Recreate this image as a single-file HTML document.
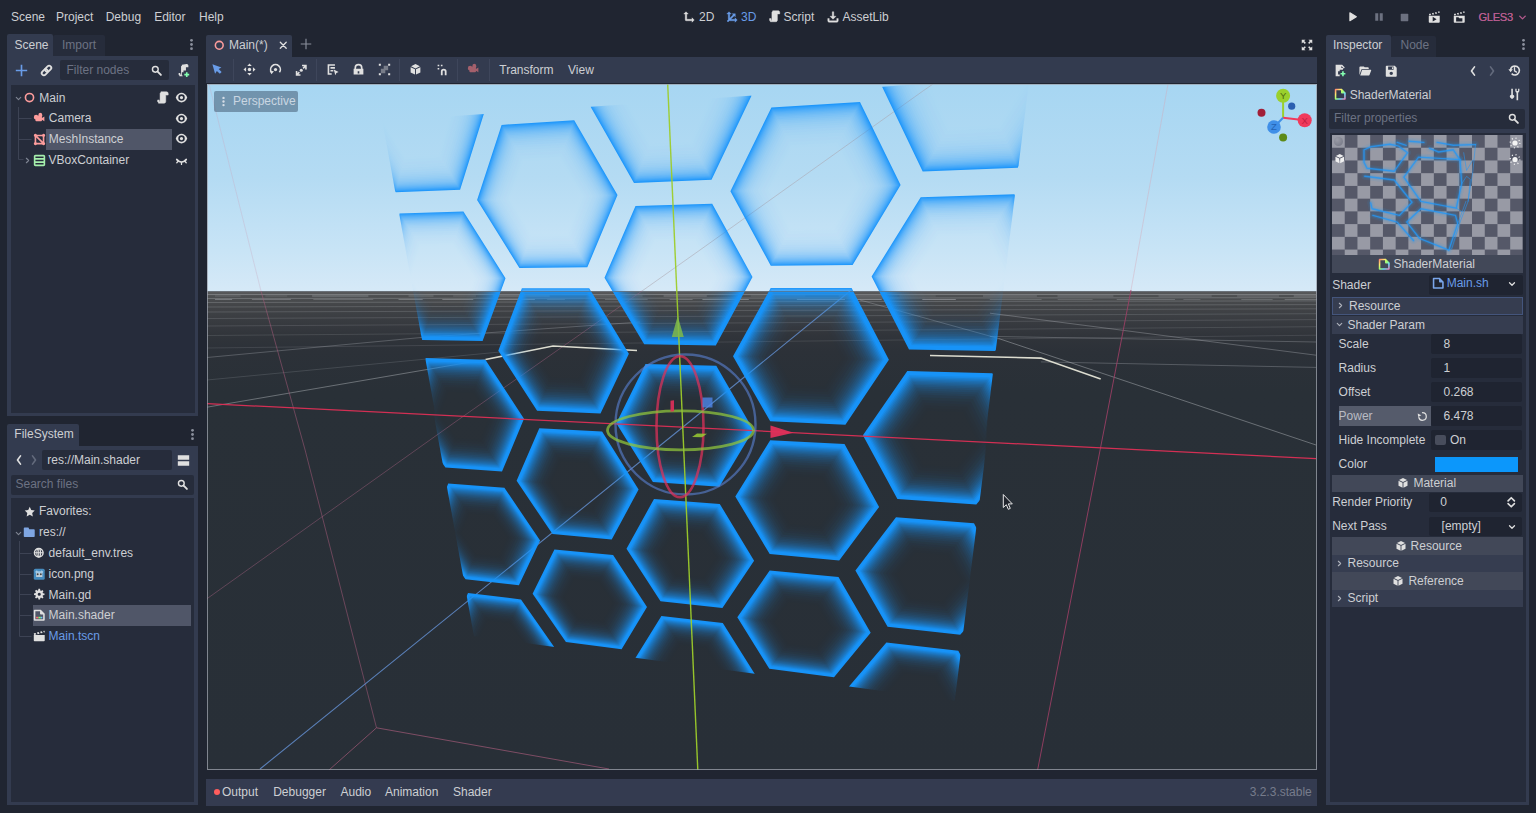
<!DOCTYPE html>
<html><head><meta charset="utf-8"><title>Godot Engine - Main</title><style>
html,body{margin:0;padding:0}
body{width:1536px;height:813px;background:#202531;position:relative;overflow:hidden;font:12px/16px "Liberation Sans",sans-serif;color:#cdcfd3}
.b,.t,.i{position:absolute}
.t{white-space:nowrap;line-height:16px;height:16px}
.i{display:block;overflow:visible}
</style></head><body>
<span class="t" style="left:11px;top:8.8px;">Scene</span>
<span class="t" style="left:56px;top:8.8px;">Project</span>
<span class="t" style="left:105.7px;top:8.8px;">Debug</span>
<span class="t" style="left:154.2px;top:8.8px;">Editor</span>
<span class="t" style="left:199px;top:8.8px;">Help</span>
<svg class="i" style="left:683.4px;top:10.5px;" width="12" height="12" viewBox="0 0 16 16"><path d="m4 1-3 3h2v8c0 .55.45 1 1 1h8v2l3-3-3-3v2h-7v-7h2z" fill="#e0e0e0" stroke="#e0e0e0" stroke-width=".500" stroke-linejoin="round"/></svg>
<span class="t" style="left:699px;top:8.6px;">2D</span>
<svg class="i" style="left:726px;top:10.5px;" width="12" height="12" viewBox="0 0 16 16"><path d="m4 1-3 3h2v7.600l-1.700 1.700 1.400 1.400 1.700-1.700h7.600v2l3-3-3-3v2h-5.600l4.600-4.600 1.400 1.400v-4.200h-4.200l1.400 1.400-4.600 4.600v-5.600h2z" fill="#699ce8" stroke="#699ce8" stroke-width=".500" stroke-linejoin="round"/></svg>
<span class="t" style="left:741px;top:8.6px;color:#699ce8;">3D</span>
<svg class="i" style="left:768px;top:10.2px;" width="12.5" height="12.5" viewBox="0 0 16 16"><path d="m6 1v1c-.55 0-1 .45-1 1v10h-1v-2h-2v2c0 .36.19.69.5.87.15.09.32.13.5.13v1h7c1.1 0 2-.9 2-2v-8h3v-2c0-1.1-.9-2-2-2z" fill="#e0e0e0" stroke="#e0e0e0" stroke-width=".600" stroke-linejoin="round"/></svg>
<span class="t" style="left:783.6px;top:8.6px;">Script</span>
<svg class="i" style="left:827.4px;top:10.5px;" width="12" height="12" viewBox="0 0 16 16"><path d="m7 1v6h-3l4 4 4-4h-3v-6zm-6 9v3c0 1.100.900 2 2 2h10c1.100 0 2-.900 2-2v-3h-2v3h-10v-3z" fill="#e0e0e0" stroke="#e0e0e0" stroke-width=".500" stroke-linejoin="round"/></svg>
<span class="t" style="left:842.6px;top:8.6px;">AssetLib</span>
<svg class="i" style="left:1347.2px;top:11.2px;" width="11.5" height="11.5" viewBox="0 0 16 16"><path d="M4 2.500l9 5.500-9 5.500z" fill="#e0e0e0" stroke="#e0e0e0" stroke-width="1.500" stroke-linejoin="round"/></svg>
<svg class="i" style="left:1373.3px;top:11px;" width="12" height="12" viewBox="0 0 16 16"><path d="M3 3h4v10H3zM9 3h4v10H9z" fill="#6c7180"/></svg>
<svg class="i" style="left:1399px;top:11.5px;" width="11" height="11" viewBox="0 0 16 16"><rect x="2.500" y="2.500" width="11" height="11" rx="1" fill="#6c7180"/></svg>
<svg class="i" style="left:1427.5px;top:10.8px;" width="12.5" height="12.5" viewBox="0 0 16 16"><path d="M1 6v8c0 .55.45 1 1 1h12c.55 0 1-.45 1-1V6zm5 1.500 5 3-5 3z" fill="#e0e0e0"/><path d="M1.200 2.800l1.900-.500.900 1.900-2.300.600zM5 1.800l1.900-.500.900 1.900-1.900.500zM8.800.800l1.900-.500.900 1.900-1.900.500zM12.600-.200l1.900-.500.500 1.900-1.500.500z" fill="#e0e0e0" transform="translate(0 1)"/></svg>
<svg class="i" style="left:1453px;top:10.8px;" width="12.5" height="12.5" viewBox="0 0 16 16"><path d="M1 6v8c0 .55.45 1 1 1h12c.55 0 1-.45 1-1V6zm3 2h3l1 1.200h4v4.300H4z" fill="#e0e0e0"/><path d="M1.200 2.800l1.900-.500.900 1.900-2.300.600zM5 1.800l1.900-.500.900 1.900-1.900.500zM8.800.800l1.900-.500.900 1.900-1.900.500zM12.600-.200l1.900-.500.500 1.900-1.500.500z" fill="#e0e0e0" transform="translate(0 1)"/></svg>
<span class="t" style="left:1478.5px;top:8.9px;color:#b85c8f;letter-spacing:-.35px;font-size:11.200px;text-shadow:0 0 .4px #b85c8f">GLES3</span>
<svg class="i" style="left:1516.5px;top:12px;" width="11" height="11" viewBox="0 0 16 16"><path d="M4 6l4 4 4-4" fill="none" stroke="#b35a8c" stroke-width="2" stroke-linecap="round" stroke-linejoin="round"/></svg>
<div class="b" style="left:7px;top:34px;width:46px;height:23px;background:#333b4f;border-radius:2px 2px 0 0"></div>
<div class="b" style="left:53px;top:35px;width:52px;height:21px;background:#262c3b;border-radius:2px 2px 0 0"></div>
<span class="t" style="left:14.5px;top:36.6px;">Scene</span>
<span class="t" style="left:62px;top:36.6px;color:#6c7283;">Import</span>
<svg class="i" style="left:185.2px;top:38.2px;" width="13" height="13" viewBox="0 0 16 16"><circle cx="8" cy="2.800" r="1.700" fill="#8a8f9c"/><circle cx="8" cy="8" r="1.700" fill="#8a8f9c"/><circle cx="8" cy="13.200" r="1.700" fill="#8a8f9c"/></svg>
<div class="b" style="left:7px;top:56px;width:190.5px;height:359.8px;background:#333b4f;"></div>
<svg class="i" style="left:14.5px;top:63.8px;" width="13" height="13" viewBox="0 0 16 16"><path d="M7 1v6H1v2h6v6h2V9h6V7H9V1z" fill="#699ce8"/></svg>
<svg class="i" style="left:40.2px;top:63.8px;" width="13" height="13" viewBox="0 0 16 16"><g fill="none" stroke="#e0e0e0" stroke-width="2.2" transform="rotate(-45 8 8)"><rect x="0.8" y="5.3" width="8.4" height="5.4" rx="2.7"/><rect x="6.8" y="5.3" width="8.4" height="5.4" rx="2.7"/></g></svg>
<div class="b" style="left:60px;top:60px;width:109px;height:20px;background:#262c3b;border-radius:2px"></div>
<span class="t" style="left:66.5px;top:62.2px;color:#6c7283;">Filter nodes</span>
<svg class="i" style="left:151.2px;top:64.8px;" width="11.5" height="11.5" viewBox="0 0 16 16"><circle cx="6" cy="6" r="4" fill="none" stroke="#e0e0e0" stroke-width="2"/><path d="M9.2 9.2l4.6 4.6" stroke="#e0e0e0" stroke-width="2.6" stroke-linecap="round"/></svg>
<svg class="i" style="left:176.8px;top:64px;" width="13" height="13" viewBox="0 0 16 16"><path d="m6 1v1c-.55 0-1 .45-1 1v10h-1v-2h-2v2c0 .36.19.69.5.87.15.09.32.13.5.13v1h4v-1h-1v-4h2v-2h3v-4h3v-2c0-1.1-.9-2-2-2z" fill="#e0e0e0"/><path d="m11 10v2h-2v2h2v2h2v-2h2v-2h-2v-2z" fill="#84ffb1"/></svg>
<div class="b" style="left:10.5px;top:84.5px;width:184px;height:328px;background:#262c3b;"></div>
<div class="b" style="left:46px;top:129px;width:125.7px;height:20.8px;background:#505668;"></div>
<svg class="i" style="left:0;top:84px" width="60" height="90" viewBox="0 84 60 90"><path d="M18.500 107v52.500M18.500 118.500h13M18.500 139.500h13M18.500 159.500h5" stroke="#3d4354" stroke-width="1" fill="none"/></svg>
<svg class="i" style="left:13.5px;top:94px;" width="9" height="9" viewBox="0 0 16 16"><path d="M4 6l4 4 4-4" fill="none" stroke="#7f8593" stroke-width="2" stroke-linecap="round" stroke-linejoin="round"/></svg>
<svg class="i" style="left:23.3px;top:91.1px;" width="13" height="13" viewBox="0 0 16 16"><circle cx="8" cy="8" r="5" fill="none" stroke="#fc9c9c" stroke-width="2"/></svg>
<span class="t" style="left:39.3px;top:89.6px;">Main</span>
<svg class="i" style="left:155.9px;top:90.8px;" width="13" height="13" viewBox="0 0 16 16"><path d="m6 1v1c-.55 0-1 .45-1 1v10h-1v-2h-2v2c0 .36.19.69.5.87.15.09.32.13.5.13v1h7c1.1 0 2-.9 2-2v-8h3v-2c0-1.1-.9-2-2-2z" fill="#e0e0e0" stroke="#e0e0e0" stroke-width=".600" stroke-linejoin="round"/></svg>
<svg class="i" style="left:175.2px;top:90.8px;" width="13" height="13" viewBox="0 0 16 16"><path d="m8 2c-2.56 0-5.79 1.95-6.96 5.71a1 1 0 0 0 0 .57c1.12 3.93 4.46 5.72 6.96 5.72s5.84-1.79 6.96-5.72a1 1 0 0 0 0-.56c-1.1-3.78-4.4-5.72-6.96-5.72zm0 2a4 4 0 0 1 4 4 4 4 0 0 1 -4 4 4 4 0 0 1 -4-4 4 4 0 0 1 4-4zm0 2a2 2 0 0 0 -2 2 2 2 0 0 0 2 2 2 2 0 0 0 2-2 2 2 0 0 0 -2-2z" fill="#e0e0e0"/></svg>
<svg class="i" style="left:32.7px;top:111.9px;" width="13" height="13" viewBox="0 0 16 16"><path d="m9.5 1a3 3 0 0 0 -3 3 3 3 0 0 0 .27 1.24 3 3 0 0 0 -2.77-1.85 3 3 0 0 0 -3 3 3 3 0 0 0 2 2.83v1.17c0 .55.45 1 1 1h6c.55 0 1-.45 1-1v-1l3 2v-6l-3 2v-1.77a3 3 0 0 0 .5-1.62 3 3 0 0 0 -3-3z" fill="#fc9c9c"/></svg>
<span class="t" style="left:48.8px;top:110.4px;">Camera</span>
<svg class="i" style="left:175.2px;top:111.5px;" width="13" height="13" viewBox="0 0 16 16"><path d="m8 2c-2.56 0-5.79 1.95-6.96 5.71a1 1 0 0 0 0 .57c1.12 3.93 4.46 5.72 6.96 5.72s5.84-1.79 6.96-5.72a1 1 0 0 0 0-.56c-1.1-3.78-4.4-5.72-6.96-5.72zm0 2a4 4 0 0 1 4 4 4 4 0 0 1 -4 4 4 4 0 0 1 -4-4 4 4 0 0 1 4-4zm0 2a2 2 0 0 0 -2 2 2 2 0 0 0 2 2 2 2 0 0 0 2-2 2 2 0 0 0 -2-2z" fill="#e0e0e0"/></svg>
<svg class="i" style="left:32.7px;top:132.7px;" width="13" height="13" viewBox="0 0 16 16"><path transform="matrix(-1 0 0 1 16 0)" d="m3 1a2 2 0 0 0 -2 2 2 2 0 0 0 1 1.73v6.54a2 2 0 0 0 -1 1.73 2 2 0 0 0 2 2 2 2 0 0 0 1.73-1h6.54a2 2 0 0 0 1.73 1 2 2 0 0 0 2-2 2 2 0 0 0 -1-1.73v-6.54a2 2 0 0 0 1-1.73 2 2 0 0 0 -2-2 2 2 0 0 0 -1.73 1h-6.54a2 2 0 0 0 -1.73-1zm1.73 3h5.86l-6.59 6.59v-5.86a2 2 0 0 0 .73-.73zm7.27 1.41v5.86a2 2 0 0 0 -.73.73h-5.86z" fill="#fc9c9c"/></svg>
<span class="t" style="left:48.8px;top:131.2px;">MeshInstance</span>
<svg class="i" style="left:175.2px;top:132.2px;" width="13" height="13" viewBox="0 0 16 16"><path d="m8 2c-2.56 0-5.79 1.95-6.96 5.71a1 1 0 0 0 0 .57c1.12 3.93 4.46 5.72 6.96 5.72s5.84-1.79 6.96-5.72a1 1 0 0 0 0-.56c-1.1-3.78-4.4-5.72-6.96-5.72zm0 2a4 4 0 0 1 4 4 4 4 0 0 1 -4 4 4 4 0 0 1 -4-4 4 4 0 0 1 4-4zm0 2a2 2 0 0 0 -2 2 2 2 0 0 0 2 2 2 2 0 0 0 2-2 2 2 0 0 0 -2-2z" fill="#e0e0e0"/></svg>
<svg class="i" style="left:22.5px;top:155.5px;" width="9" height="9" viewBox="0 0 16 16"><path d="M6 4l4 4-4 4" fill="none" stroke="#7f8593" stroke-width="2" stroke-linecap="round" stroke-linejoin="round"/></svg>
<svg class="i" style="left:32.7px;top:153.5px;" width="13" height="13" viewBox="0 0 16 16"><path d="m3 1c-1.1 0-2 .9-2 2v10c0 1.1.9 2 2 2h10c1.1 0 2-.9 2-2v-10c0-1.1-.9-2-2-2zm0 2h10v2h-10zm0 4h10v2h-10zm0 4h10v2h-10z" fill="#a5efac"/></svg>
<span class="t" style="left:48.5px;top:152px;">VBoxContainer</span>
<svg class="i" style="left:175.2px;top:154.3px;" width="13" height="13" viewBox="0 0 16 16"><path d="M2.300 6.800Q8 13.200 13.700 6.800" fill="none" stroke="#e0e0e0" stroke-width="2.300" stroke-linecap="round"/><path d="M3.600 9.300l-1.400 1.500M12.400 9.300l1.400 1.500M8 11v1.800" stroke="#e0e0e0" stroke-width="1.600" stroke-linecap="round"/></svg>
<div class="b" style="left:7px;top:424px;width:71.5px;height:23px;background:#333b4f;border-radius:2px 2px 0 0"></div>
<span class="t" style="left:14.3px;top:426.3px;">FileSystem</span>
<svg class="i" style="left:185.5px;top:428px;" width="13" height="13" viewBox="0 0 16 16"><circle cx="8" cy="2.800" r="1.700" fill="#8a8f9c"/><circle cx="8" cy="8" r="1.700" fill="#8a8f9c"/><circle cx="8" cy="13.200" r="1.700" fill="#8a8f9c"/></svg>
<div class="b" style="left:7px;top:446px;width:190.5px;height:359px;background:#333b4f;"></div>
<svg class="i" style="left:12.6px;top:454px;" width="12" height="12" viewBox="0 0 16 16"><path d="M10 2.500l-4 5.500 4 5.500" fill="none" stroke="#e0e0e0" stroke-width="2.200" stroke-linecap="round" stroke-linejoin="round"/></svg>
<svg class="i" style="left:28px;top:454px;" width="12" height="12" viewBox="0 0 16 16"><path d="M6 2.500l4 5.500-4 5.500" fill="none" stroke="#636a7c" stroke-width="2.200" stroke-linecap="round" stroke-linejoin="round"/></svg>
<div class="b" style="left:42.3px;top:450.4px;width:129.7px;height:20.1px;background:#262c3b;border-radius:2px"></div>
<span class="t" style="left:47.3px;top:452px;">res://Main.shader</span>
<svg class="i" style="left:177px;top:453.8px;" width="13" height="13" viewBox="0 0 16 16"><path d="M1 1.500h14V7H1zM1 9h14v5.500H1z" fill="#e0e0e0"/></svg>
<div class="b" style="left:10.7px;top:474.5px;width:183.3px;height:20px;background:#262c3b;border-radius:2px"></div>
<span class="t" style="left:15.5px;top:476px;color:#6c7283;">Search files</span>
<svg class="i" style="left:177.2px;top:478.8px;" width="11.5" height="11.5" viewBox="0 0 16 16"><circle cx="6" cy="6" r="4" fill="none" stroke="#e0e0e0" stroke-width="2"/><path d="M9.2 9.2l4.6 4.6" stroke="#e0e0e0" stroke-width="2.6" stroke-linecap="round"/></svg>
<div class="b" style="left:10.7px;top:498px;width:183.3px;height:303.5px;background:#262c3b;"></div>
<div class="b" style="left:33px;top:605.2px;width:158px;height:20.4px;background:#505668;"></div>
<svg class="i" style="left:0;top:520px" width="60" height="130" viewBox="0 520 60 130"><path d="M19.500 541v95.500M19.500 553.500h12M19.500 574.500h12M19.500 594.500h12M19.500 615.500h12M19.500 636.500h12" stroke="#3d4354" stroke-width="1" fill="none"/></svg>
<svg class="i" style="left:23.6px;top:505.9px;" width="11.5" height="11.5" viewBox="0 0 16 16"><path d="M8 1.200l2.100 4.500 4.900.600-3.600 3.400.900 4.900L8 12.200l-4.300 2.400.900-4.900L1 6.300l4.900-.600z" fill="#e0e0e0"/></svg>
<span class="t" style="left:39px;top:503.4px;">Favorites:</span>
<svg class="i" style="left:14px;top:528.5px;" width="9" height="9" viewBox="0 0 16 16"><path d="M4 6l4 4 4-4" fill="none" stroke="#7f8593" stroke-width="2" stroke-linecap="round" stroke-linejoin="round"/></svg>
<svg class="i" style="left:23.1px;top:525.8px;" width="12.5" height="12.5" viewBox="0 0 16 16"><path d="M2 2c-.55 0-1 .45-1 1v10c0 .55.45 1 1 1h12c.55 0 1-.45 1-1V5c0-.55-.45-1-1-1H8L7 2z" fill="#7fa6e2"/></svg>
<span class="t" style="left:39px;top:524.2px;">res://</span>
<svg class="i" style="left:33.2px;top:547.2px;" width="11.5" height="11.5" viewBox="0 0 16 16"><circle cx="8" cy="8" r="6" fill="none" stroke="#e0e0e0" stroke-width="2"/><ellipse cx="8" cy="8" rx="2.600" ry="6" fill="none" stroke="#e0e0e0" stroke-width="1.500"/><path d="M2 8h12M8 2v12" stroke="#e0e0e0" stroke-width="1.500"/></svg>
<span class="t" style="left:48.6px;top:545px;">default_env.tres</span>
<svg class="i" style="left:32.8px;top:567.5px;" width="12.5" height="12.5" viewBox="0 0 16 16"><rect x="1" y="1" width="14" height="14" rx="2" fill="#478cbf"/><path d="M4 6h8v5.500H4z" fill="#e0e0e0" opacity=".8"/><circle cx="6" cy="8" r="1.200" fill="#414042"/><circle cx="10" cy="8" r="1.200" fill="#414042"/><path d="M3 4.500l2-1.500 1 1h4l1-1 2 1.500-.5 2h-9z" fill="#a4c9e4"/></svg>
<span class="t" style="left:48.6px;top:565.8px;">icon.png</span>
<svg class="i" style="left:32.8px;top:588.4px;" width="12.5" height="12.5" viewBox="0 0 16 16"><path d="M7 1l-.4 2-.9.400-1.700-1.100-1.400 1.400 1.100 1.700-.4.900L1.300 7v2l2 .4.400.9-1.100 1.700 1.400 1.400 1.700-1.100.9.400.4 2h2l.4-2 .9-.400 1.700 1.100 1.400-1.400-1.100-1.700.4-.9 2-.4V7l-2-.4-.4-.9 1.100-1.700-1.400-1.400-1.700 1.100-.9-.400L9 1zm1 5a2 2 0 1 1 0 4 2 2 0 0 1 0-4z" fill="#e0e0e0"/></svg>
<span class="t" style="left:48.6px;top:586.6px;">Main.gd</span>
<svg class="i" style="left:32.8px;top:609.1px;" width="12.5" height="12.5" viewBox="0 0 16 16"><path d="M2 1c-.55 0-1 .45-1 1v12c0 .55.45 1 1 1h12c.55 0 1-.45 1-1V6l-5-5zm1 2h6v3c0 .55.45 1 1 1h3v6H3z" fill="#e0e0e0"/><path d="M4 10h3v2H4z" fill="#ff7070"/><path d="M7 10h3v2H7z" fill="#7aff70"/><path d="M10 10h2v2h-2z" fill="#70bfff"/></svg>
<span class="t" style="left:48.6px;top:607.4px;">Main.shader</span>
<svg class="i" style="left:32.8px;top:629.8px;" width="12.5" height="12.5" viewBox="0 0 16 16"><path d="M1 6.500v7c0 .55.45 1 1 1h12c.55 0 1-.45 1-1v-7z" fill="#e0e0e0"/><path d="M1 2.800l2.300-.600 1 2-3 .800zM5 1.800l2.300-.600 1 2-2.300.600zM9 .800l2.300-.600 1 2-2.300.600zM13-.200l1.700-.400.500 2-1.200.400z" fill="#e0e0e0" transform="translate(0 1.500)"/></svg>
<span class="t" style="left:48.6px;top:628.2px;color:#699ce8;">Main.tscn</span>
<div class="b" style="left:206.3px;top:34.5px;width:85.7px;height:22.5px;background:#333b4f;border-radius:2px 2px 0 0"></div>
<svg class="i" style="left:212.8px;top:38.5px;" width="12.5" height="12.5" viewBox="0 0 16 16"><circle cx="8" cy="8" r="5" fill="none" stroke="#fc9c9c" stroke-width="2"/></svg>
<span class="t" style="left:229px;top:36.7px;">Main(*)</span>
<svg class="i" style="left:277.8px;top:39.5px;" width="10.5" height="10.5" viewBox="0 0 16 16"><path d="M3.5 3.5l9 9M12.5 3.5l-9 9" stroke="#e0e0e0" stroke-width="2" stroke-linecap="round"/></svg>
<svg class="i" style="left:299px;top:37.3px;" width="14" height="14" viewBox="0 0 16 16"><path d="M8 2v12M2 8h12" stroke="#8a8f9c" stroke-width="1.3"/></svg>
<svg class="i" style="left:1301px;top:38.7px;" width="12" height="12" viewBox="0 0 16 16"><path d="M1 1h5l-1.800 1.800 2.300 2.300-1.400 1.400-2.300-2.300L1 6zM15 1v5l-1.800-1.800-2.300 2.300-1.400-1.400 2.300-2.300L10 1zM1 15v-5l1.800 1.800 2.300-2.300 1.400 1.400-2.300 2.300L6 15zM15 15h-5l1.800-1.800-2.300-2.300 1.400-1.400 2.300 2.300L15 10z" fill="#e0e0e0"/></svg>
<div class="b" style="left:206.3px;top:56.7px;width:1110.7px;height:26.3px;background:#333b4f;"></div>
<svg class="i" style="left:211.1px;top:63.3px;" width="12.5" height="12.5" viewBox="0 0 16 16"><path d="M1.800 1.500L5.200 13.600 7.500 10.100 11.300 13.900 13.600 11.600 9.800 7.800 13.300 5.600z" fill="#699ce8"/></svg>
<div class="b" style="left:232.5px;top:59px;width:1px;height:22px;background:#3e465b;"></div>
<div class="b" style="left:316px;top:59px;width:1px;height:22px;background:#3e465b;"></div>
<div class="b" style="left:398.5px;top:59px;width:1px;height:22px;background:#3e465b;"></div>
<div class="b" style="left:456.5px;top:59px;width:1px;height:22px;background:#3e465b;"></div>
<div class="b" style="left:488.5px;top:59px;width:1px;height:22px;background:#3e465b;"></div>
<svg class="i" style="left:243.2px;top:63.3px;" width="13" height="13" viewBox="0 0 16 16"><path d="m8 .600-2.800 3.200h5.600zm0 14.800-2.800-3.200h5.600zm-7.400-7.400 3.200-2.800v5.600zm14.800 0-3.200-2.800v5.600z" fill="#e0e0e0"/><circle cx="8" cy="8" r="2.100" fill="#e0e0e0"/></svg>
<svg class="i" style="left:268.5px;top:63.3px;" width="13" height="13" viewBox="0 0 16 16"><path d="M3.200 11.500A6 6 0 1 1 12.800 11.500" fill="none" stroke="#e0e0e0" stroke-width="2"/><path d="M.8 9.500l2.200 4.300 3.100-3.500z" fill="#e0e0e0"/><circle cx="8" cy="8" r="2" fill="#e0e0e0"/></svg>
<svg class="i" style="left:294.8px;top:63.5px;" width="12.5" height="12.5" viewBox="0 0 16 16"><path d="M9 1h6v6h-2v-2.600l-1.900 1.900-1.400-1.400 1.900-1.900h-2.600zM1 9h2v2.600l1.900-1.900 1.400 1.400-1.900 1.900h2.600v2h-6z" fill="#e0e0e0"/><circle cx="8" cy="8" r="2" fill="#e0e0e0"/></svg>
<svg class="i" style="left:326.2px;top:63.3px;" width="13" height="13" viewBox="0 0 16 16"><path d="M2 1.500h9v2H4v9h3v2H2zM5.500 5h5.500v2h-5.500zM5.500 8.500h3.500v2h-3.500z" fill="#e0e0e0"/><path d="m9.500 8 2 7 1.300-2.700 2.700-1.300z" fill="#e0e0e0"/></svg>
<svg class="i" style="left:351.5px;top:63.3px;" width="13" height="13" viewBox="0 0 16 16"><path d="m8 1a5 5 0 0 0 -5 5v1h-1v7h12v-7h-1v-1a5 5 0 0 0 -5-5zm0 2a3 3 0 0 1 3 3v1h-6v-1a3 3 0 0 1 3-3zm-1 7h2v3h-2z" fill="#e0e0e0"/></svg>
<svg class="i" style="left:377.5px;top:63.3px;" width="13" height="13" viewBox="0 0 16 16"><path d="M1 1h2.500v2.500H1zM12.500 1H15v2.500h-2.500zM1 12.500h2.500V15H1zM12.500 12.500H15V15h-2.500z" fill="#e0e0e0"/><path d="M7 3.500h5.500V9H9v3.500H3.500V7H7z" fill="#e0e0e0" fill-opacity=".4"/></svg>
<svg class="i" style="left:409.2px;top:63.3px;" width="13" height="13" viewBox="0 0 16 16"><path d="M8 1.300L13.400 4 8 6.700 2.600 4zM2 5.100l5.400 2.700v6.500L2 11.600zM14 5.100v6.500l-5.400 2.700V7.800z" fill="#e0e0e0"/></svg>
<svg class="i" style="left:436.1px;top:63.3px;" width="13" height="13" viewBox="0 0 16 16"><path d="M2 2h2v2H2zM6 2h2v2H6zM2 6h2v2H2z" fill="#e0e0e0"/><path d="M6 15v-4.500a3.500 3.500 0 0 1 7 0V15h-2.200v-4.500a1.300 1.300 0 0 0-2.600 0V15z" fill="#e0e0e0"/></svg>
<svg class="i" style="left:466.5px;top:63.3px;" width="13" height="13" viewBox="0 0 16 16"><path d="m9.5 1a3 3 0 0 0 -3 3 3 3 0 0 0 .27 1.24 3 3 0 0 0 -2.77-1.85 3 3 0 0 0 -3 3 3 3 0 0 0 2 2.83v1.17c0 .55.45 1 1 1h6c.55 0 1-.45 1-1v-1l3 2v-6l-3 2v-1.77a3 3 0 0 0 .5-1.62 3 3 0 0 0 -3-3z" fill="#a4606c"/></svg>
<span class="t" style="left:499.3px;top:61.7px;">Transform</span>
<span class="t" style="left:568px;top:61.7px;">View</span>
<div class="b" style="left:206.3px;top:778.5px;width:1111.2px;height:27.5px;background:#343b50;"></div>
<div class="b" style="left:213.500px;top:789px;width:6px;height:6px;border-radius:3px;background:#ff5d5d"></div>
<span class="t" style="left:222px;top:783.8px;">Output</span>
<span class="t" style="left:273.2px;top:783.8px;">Debugger</span>
<span class="t" style="left:340.5px;top:783.8px;">Audio</span>
<span class="t" style="left:385px;top:783.8px;">Animation</span>
<span class="t" style="left:453px;top:783.8px;">Shader</span>
<span class="t" style="left:1249.7px;top:783.8px;color:#777c8c;">3.2.3.stable</span>
<div class="b" style="left:1325.7px;top:35px;width:65.3px;height:22px;background:#333b4f;border-radius:2px 2px 0 0"></div>
<div class="b" style="left:1391px;top:35.5px;width:44.6px;height:21px;background:#262c3b;border-radius:2px 2px 0 0"></div>
<span class="t" style="left:1333px;top:36.7px;">Inspector</span>
<span class="t" style="left:1400.5px;top:36.7px;color:#6c7283;">Node</span>
<svg class="i" style="left:1516.8px;top:38.2px;" width="13" height="13" viewBox="0 0 16 16"><circle cx="8" cy="2.800" r="1.700" fill="#8a8f9c"/><circle cx="8" cy="8" r="1.700" fill="#8a8f9c"/><circle cx="8" cy="13.200" r="1.700" fill="#8a8f9c"/></svg>
<div class="b" style="left:1325.7px;top:56.5px;width:203.3px;height:748.5px;background:#333b4f;"></div>
<svg class="i" style="left:1333.5px;top:64.3px;" width="13" height="13" viewBox="0 0 16 16"><path d="M2 1v14h5v-2H5v-4h2V7h4V5.500L13 5v-1l-3-3zm7 1.500L11.500 5H9z" fill="#e0e0e0"/><path d="m10 9v2h-2v2h2v2h2v-2h2v-2h-2v-2z" fill="#84ffb1"/></svg>
<svg class="i" style="left:1358.9px;top:64.3px;" width="13" height="13" viewBox="0 0 16 16"><path d="M1.500 3c-.5 0-1 .5-1 1v9.500l2.300-6.500c.2-.6.700-1 1.300-1H12V5c0-.5-.5-1-1-1H7L6 3zM4.200 7.200c-.3 0-.5.200-.6.500L1.500 14h10.800c.3 0 .5-.2.600-.5l2.100-5.600c.1-.4-.1-.7-.5-.7z" fill="#e0e0e0"/></svg>
<svg class="i" style="left:1384.8px;top:64.5px;" width="12.5" height="12.5" viewBox="0 0 16 16"><path d="M2 1c-.5 0-1 .5-1 1v12c0 .5.5 1 1 1h12c.5 0 1-.5 1-1V3.500L12.500 1zM4 2h7v4H4zm5 .800v2.400h1.400V2.800zM8 8.500a2.200 2.200 0 1 1 0 4.400 2.200 2.200 0 0 1 0-4.400z" fill="#e0e0e0"/></svg>
<svg class="i" style="left:1466.9px;top:64.8px;" width="12" height="12" viewBox="0 0 16 16"><path d="M10 2.500l-4 5.500 4 5.500" fill="none" stroke="#e0e0e0" stroke-width="2.200" stroke-linecap="round" stroke-linejoin="round"/></svg>
<svg class="i" style="left:1485.8px;top:64.8px;" width="12" height="12" viewBox="0 0 16 16"><path d="M6 2.500l4 5.500-4 5.500" fill="none" stroke="#636a7c" stroke-width="2.200" stroke-linecap="round" stroke-linejoin="round"/></svg>
<svg class="i" style="left:1508.4px;top:64.3px;" width="13" height="13" viewBox="0 0 16 16"><path d="M8.500 1.500a6.500 6.500 0 0 0-6.300 5H.5l2.700 3.500L6 6.500H4.300a4.500 4.500 0 1 1 .9 4.600l-1.400 1.400A6.500 6.500 0 1 0 8.500 1.500z" fill="#e0e0e0"/><path d="M8 4.500v4l2.500 1.500" fill="none" stroke="#e0e0e0" stroke-width="1.600" stroke-linecap="round"/></svg>
<svg class="i" style="left:1333.8px;top:88.2px;" width="12.5" height="12.5" viewBox="0 0 16 16"><path d="M2 1c-.55 0-1 .45-1 1v12c0 .55.45 1 1 1h12c.55 0 1-.45 1-1V6l-5-5zm1 2h6v3c0 .55.45 1 1 1h3v6H3z" fill="url(#rb)"/></svg>
<span class="t" style="left:1349.7px;top:86.5px;">ShaderMaterial</span>
<svg class="i" style="left:1507.9px;top:88px;" width="13" height="13" viewBox="0 0 16 16"><path d="M4 1v7.300a2.500 2.500 0 1 0 2 0V1z" fill="#e0e0e0"/><path d="M9 1v2.500c0 1 .6 1.900 1.500 2.300V15h2V5.800c.9-.4 1.500-1.300 1.500-2.300V1h-1.600v2.800h-1.800V1z" fill="#e0e0e0"/></svg>
<div class="b" style="left:1328.6px;top:108.5px;width:196.9px;height:20.5px;background:#262c3b;border-radius:2px"></div>
<span class="t" style="left:1334px;top:110.3px;color:#6c7283;">Filter properties</span>
<svg class="i" style="left:1508.2px;top:113px;" width="11.5" height="11.5" viewBox="0 0 16 16"><circle cx="6" cy="6" r="4" fill="none" stroke="#e0e0e0" stroke-width="2"/><path d="M9.2 9.2l4.6 4.6" stroke="#e0e0e0" stroke-width="2.6" stroke-linecap="round"/></svg>
<div class="b" style="left:1329.6px;top:132.5px;width:196.4px;height:669.5px;background:#262c3b;"></div>
<svg class="i" style="left:1332px;top:135px" width="190.7" height="120" viewBox="0 0 190.7 120">
<defs><pattern id="ck" width="25.46" height="25.46" patternUnits="userSpaceOnUse"><rect width="25.46" height="25.46" fill="#555868"/><rect width="12.73" height="12.73" fill="#989aa5"/><rect x="12.73" y="12.73" width="12.73" height="12.73" fill="#989aa5"/></pattern></defs>
<rect width="100%" height="100%" fill="url(#ck)"/>
<g fill="none" stroke="#2496f4" stroke-linejoin="round" stroke-linecap="round">
<polyline points="75.6,17.7 66.7,11.1 57.9,9.2 38.7,11.8 32.0,14.8 32.0,27.3 35.0,33.2 62.3,36.2 75.6,17.7" stroke-width="7" stroke-opacity=".09"/>
<polyline points="32.8,41.3 62.3,45.0 80.0,67.2 67.4,80.4 40.1,73.8 38.7,67.9" stroke-width="7" stroke-opacity=".09"/>
<polyline points="124.3,73.1 88.8,66.4 71.9,42.1 86.6,22.1 128.0,24.6 129.7,48.7 124.3,73.1" stroke-width="7" stroke-opacity=".09"/>
<polyline points="88.8,73.8 74.8,87.1 87.4,103.3 116.9,115.1 125.7,88.6 123.5,80.4 88.8,73.8" stroke-width="7" stroke-opacity=".09"/>
<polyline points="40.9,80.4 65.2,87.1 81.5,105.5" stroke-width="7" stroke-opacity=".09"/>
<polyline points="65.2,7.4 74.1,10.3" stroke-width="7" stroke-opacity=".09"/>
<polyline points="77.0,6.2 91.8,7.4" stroke-width="7" stroke-opacity=".09"/>
<polyline points="105.1,7.4 121.3,10.3 143.5,9.6" stroke-width="7" stroke-opacity=".09"/>
<polyline points="97.7,13.3 106.6,17.0 121.3,14.8 128.0,24.6" stroke-width="7" stroke-opacity=".09"/>
<polyline points="75.6,17.7 66.7,11.1 57.9,9.2 38.7,11.8 32.0,14.8 32.0,27.3 35.0,33.2 62.3,36.2 75.6,17.7" stroke-width="3.600" stroke-opacity=".2"/>
<polyline points="32.8,41.3 62.3,45.0 80.0,67.2 67.4,80.4 40.1,73.8 38.7,67.9" stroke-width="3.600" stroke-opacity=".2"/>
<polyline points="124.3,73.1 88.8,66.4 71.9,42.1 86.6,22.1 128.0,24.6 129.7,48.7 124.3,73.1" stroke-width="3.600" stroke-opacity=".2"/>
<polyline points="88.8,73.8 74.8,87.1 87.4,103.3 116.9,115.1 125.7,88.6 123.5,80.4 88.8,73.8" stroke-width="3.600" stroke-opacity=".2"/>
<polyline points="40.9,80.4 65.2,87.1 81.5,105.5" stroke-width="3.600" stroke-opacity=".2"/>
<polyline points="65.2,7.4 74.1,10.3" stroke-width="3.600" stroke-opacity=".2"/>
<polyline points="77.0,6.2 91.8,7.4" stroke-width="3.600" stroke-opacity=".2"/>
<polyline points="105.1,7.4 121.3,10.3 143.5,9.6" stroke-width="3.600" stroke-opacity=".2"/>
<polyline points="97.7,13.3 106.6,17.0 121.3,14.8 128.0,24.6" stroke-width="3.600" stroke-opacity=".2"/>
<polyline points="75.6,17.7 66.7,11.1 57.9,9.2 38.7,11.8 32.0,14.8 32.0,27.3 35.0,33.2 62.3,36.2 75.6,17.7" stroke-width="1.400" stroke-opacity=".82"/>
<polyline points="32.8,41.3 62.3,45.0 80.0,67.2 67.4,80.4 40.1,73.8 38.7,67.9" stroke-width="1.400" stroke-opacity=".82"/>
<polyline points="124.3,73.1 88.8,66.4 71.9,42.1 86.6,22.1 128.0,24.6 129.7,48.7 124.3,73.1" stroke-width="1.400" stroke-opacity=".82"/>
<polyline points="88.8,73.8 74.8,87.1 87.4,103.3 116.9,115.1 125.7,88.6 123.5,80.4 88.8,73.8" stroke-width="1.400" stroke-opacity=".82"/>
<polyline points="40.9,80.4 65.2,87.1 81.5,105.5" stroke-width="1.400" stroke-opacity=".82"/>
<polyline points="65.2,7.4 74.1,10.3" stroke-width="1.400" stroke-opacity=".82"/>
<polyline points="77.0,6.2 91.8,7.4" stroke-width="1.400" stroke-opacity=".82"/>
<polyline points="105.1,7.4 121.3,10.3 143.5,9.6" stroke-width="1.400" stroke-opacity=".82"/>
<polyline points="97.7,13.3 106.6,17.0 121.3,14.8 128.0,24.6" stroke-width="1.400" stroke-opacity=".82"/>
<polyline points="143.5,9.6 140.8,36.9 136.1,66.4 127.5,88.6 119.8,113.7 116.9,115.1" stroke-width=".800" stroke-opacity=".7"/>
<polyline points="131.7,17.7 134.6,35.4 140.8,25.1" stroke-width=".800" stroke-opacity=".7"/>
<polyline points="129.7,48.7 134.6,41.3 138.3,44.3 136.1,66.4" stroke-width=".800" stroke-opacity=".7"/>
<polyline points="124.3,73.1 130.2,76.8 133.9,66.4" stroke-width=".800" stroke-opacity=".7"/>
<polyline points="125.7,88.6 130.2,76.8" stroke-width=".800" stroke-opacity=".7"/>
</g>
</svg>
<div class="b" style="left:1334px;top:137px;width:9px;height:9px;border-radius:5px;background:radial-gradient(circle at 35% 30%,#9a9ca6,#747785 70%);opacity:.75"></div>
<svg class="i" style="left:1333.8px;top:152.8px;" width="11.5" height="11.5" viewBox="0 0 16 16"><path d="M8 1.300L13.400 4 8 6.700 2.600 4zM2 5.100l5.400 2.700v6.500L2 11.600zM14 5.100v6.500l-5.400 2.700V7.800z" fill="#f0f0f0"/></svg>
<svg class="i" style="left:1508px;top:136px" width="14" height="32" viewBox="0 0 14 32"><g fill="#f4f4f4"><circle cx="7" cy="7" r="2.600"/><circle cx="7" cy="23.500" r="2.600"/></g><g stroke="#f4f4f4" stroke-width="1.300" stroke-dasharray="1 2.770" fill="none"><circle cx="7" cy="7" r="4.800"/><circle cx="7" cy="23.500" r="4.800"/></g></svg>
<div class="b" style="left:1332px;top:255px;width:190.7px;height:17.5px;background:#424858;"></div>
<svg class="i" style="left:1377.8px;top:257.8px;" width="12.5" height="12.5" viewBox="0 0 16 16"><path d="M2 1c-.55 0-1 .45-1 1v12c0 .55.45 1 1 1h12c.55 0 1-.45 1-1V6l-5-5zm1 2h6v3c0 .55.45 1 1 1h3v6H3z" fill="url(#rb)"/></svg>
<span class="t" style="left:1393.6px;top:255.9px;">ShaderMaterial</span>
<span class="t" style="left:1332.2px;top:276.7px;">Shader</span>
<div class="b" style="left:1429px;top:274.5px;width:93.5px;height:20px;background:#1f2431;border-radius:2px"></div>
<svg class="i" style="left:1431.8px;top:277.2px;" width="12.5" height="12.5" viewBox="0 0 16 16"><path d="M2 1c-.55 0-1 .45-1 1v12c0 .55.45 1 1 1h12c.55 0 1-.45 1-1V6l-5-5zm1 2h6v3c0 .55.45 1 1 1h3v6H3z" fill="#7aa6ea"/></svg>
<span class="t" style="left:1446.7px;top:275.4px;color:#699ce8;">Main.sh</span>
<svg class="i" style="left:1507px;top:279px;" width="10" height="10" viewBox="0 0 16 16"><path d="M4 6l4 4 4-4" fill="none" stroke="#e0e0e0" stroke-width="2" stroke-linecap="round" stroke-linejoin="round"/></svg>
<div class="b" style="left:1332px;top:297px;width:190.5px;height:17.5px;background:#363d50;box-shadow:inset 0 0 0 1px #44557c"></div>
<svg class="i" style="left:1335.5px;top:301.3px;" width="9" height="9" viewBox="0 0 16 16"><path d="M6 4l4 4-4 4" fill="none" stroke="#aeb2bb" stroke-width="2" stroke-linecap="round" stroke-linejoin="round"/></svg>
<span class="t" style="left:1349px;top:297.8px;">Resource</span>
<div class="b" style="left:1332px;top:316px;width:190.5px;height:18px;background:#363d50;"></div>
<svg class="i" style="left:1334.5px;top:320.3px;" width="9" height="9" viewBox="0 0 16 16"><path d="M4 6l4 4 4-4" fill="none" stroke="#aeb2bb" stroke-width="2" stroke-linecap="round" stroke-linejoin="round"/></svg>
<span class="t" style="left:1347.5px;top:316.8px;">Shader Param</span>
<div class="b" style="left:1338.6px;top:406px;width:92px;height:20.3px;background:#555b6b;"></div>
<div class="b" style="left:1430.6px;top:334px;width:91.7px;height:20px;background:#1f2431;border-radius:2px"></div>
<span class="t" style="left:1338.6px;top:336px;">Scale</span>
<span class="t" style="left:1443.5px;top:336px;">8</span>
<div class="b" style="left:1430.6px;top:358px;width:91.7px;height:20px;background:#1f2431;border-radius:2px"></div>
<span class="t" style="left:1338.6px;top:360px;">Radius</span>
<span class="t" style="left:1443.5px;top:360px;">1</span>
<div class="b" style="left:1430.6px;top:382px;width:91.7px;height:20px;background:#1f2431;border-radius:2px"></div>
<span class="t" style="left:1338.6px;top:384px;">Offset</span>
<span class="t" style="left:1443.5px;top:384px;">0.268</span>
<div class="b" style="left:1430.6px;top:406px;width:91.7px;height:20px;background:#1f2431;border-radius:2px"></div>
<span class="t" style="left:1338.6px;top:408px;color:#b9bcc4;">Power</span>
<span class="t" style="left:1443.5px;top:408px;">6.478</span>
<svg class="i" style="left:1416.5px;top:410.5px;" width="11" height="11" viewBox="0 0 16 16"><path d="M8 2.500a5.500 5.500 0 1 1-5.300 7" fill="none" stroke="#e0e0e0" stroke-width="1.800" stroke-linecap="round"/><path d="M1 3.500l.800 5.300 4.500-2.500z" fill="#e0e0e0"/></svg>
<div class="b" style="left:1430.6px;top:430px;width:91.7px;height:20px;background:#1f2431;border-radius:2px"></div>
<span class="t" style="left:1338.6px;top:431.8px;">Hide Incomplete</span>
<div class="b" style="left:1435px;top:434.5px;width:10.7px;height:10.8px;background:#484d5c;border-radius:2px"></div>
<span class="t" style="left:1450px;top:431.8px;">On</span>
<span class="t" style="left:1338.6px;top:456px;">Color</span>
<div class="b" style="left:1434.9px;top:456.5px;width:83.1px;height:15.1px;background:#0c97fb;"></div>
<div class="b" style="left:1332px;top:474.7px;width:190.5px;height:17.5px;background:#424858;"></div>
<svg class="i" style="left:1397px;top:477.3px;" width="12" height="12" viewBox="0 0 16 16"><path d="M8 1.300L13.400 4 8 6.700 2.600 4zM2 5.100l5.400 2.700v6.500L2 11.600zM14 5.100v6.500l-5.400 2.700V7.800z" fill="#e0e0e0"/></svg>
<span class="t" style="left:1413.4px;top:475.3px;">Material</span>
<span class="t" style="left:1332.2px;top:494.3px;">Render Priority</span>
<div class="b" style="left:1428.5px;top:493.3px;width:93.8px;height:18.7px;background:#1f2431;border-radius:2px"></div>
<span class="t" style="left:1440.2px;top:494.3px;">0</span>
<svg class="i" style="left:1504px;top:495.4px;" width="14.5" height="14.5" viewBox="0 0 16 16"><path d="M4.500 6.500L8 3l3.500 3.500M4.500 9.500L8 13l3.500-3.500" fill="none" stroke="#e0e0e0" stroke-width="1.800" stroke-linecap="round" stroke-linejoin="round"/></svg>
<span class="t" style="left:1332.2px;top:518.2px;">Next Pass</span>
<div class="b" style="left:1428.5px;top:516.5px;width:93.8px;height:19.5px;background:#1f2431;border-radius:2px"></div>
<span class="t" style="left:1441.6px;top:518.2px;">[empty]</span>
<svg class="i" style="left:1507px;top:522px;" width="10" height="10" viewBox="0 0 16 16"><path d="M4 6l4 4 4-4" fill="none" stroke="#e0e0e0" stroke-width="2" stroke-linecap="round" stroke-linejoin="round"/></svg>
<div class="b" style="left:1332px;top:537px;width:190.5px;height:17.7px;background:#424858;"></div>
<svg class="i" style="left:1394.5px;top:539.7px;" width="12" height="12" viewBox="0 0 16 16"><path d="M8 1.300L13.400 4 8 6.700 2.600 4zM2 5.100l5.400 2.700v6.500L2 11.600zM14 5.100v6.500l-5.400 2.700V7.800z" fill="#e0e0e0"/></svg>
<span class="t" style="left:1410.6px;top:537.7px;">Resource</span>
<div class="b" style="left:1332px;top:554.7px;width:190.5px;height:17.3px;background:#363d50;"></div>
<svg class="i" style="left:1334.5px;top:558.8px;" width="9" height="9" viewBox="0 0 16 16"><path d="M6 4l4 4-4 4" fill="none" stroke="#aeb2bb" stroke-width="2" stroke-linecap="round" stroke-linejoin="round"/></svg>
<span class="t" style="left:1347.5px;top:555.3px;">Resource</span>
<div class="b" style="left:1332px;top:572px;width:190.5px;height:18px;background:#424858;"></div>
<svg class="i" style="left:1392.4px;top:575px;" width="12" height="12" viewBox="0 0 16 16"><path d="M8 1.300L13.400 4 8 6.700 2.600 4zM2 5.100l5.400 2.700v6.500L2 11.600zM14 5.100v6.500l-5.400 2.700V7.800z" fill="#e0e0e0"/></svg>
<span class="t" style="left:1408.4px;top:573px;">Reference</span>
<div class="b" style="left:1332px;top:590px;width:190.5px;height:17.4px;background:#363d50;"></div>
<svg class="i" style="left:1334.5px;top:593.9px;" width="9" height="9" viewBox="0 0 16 16"><path d="M6 4l4 4-4 4" fill="none" stroke="#aeb2bb" stroke-width="2" stroke-linecap="round" stroke-linejoin="round"/></svg>
<span class="t" style="left:1347.5px;top:590.4px;">Script</span>
<svg class="i" style="left:207px;top:84px;overflow:hidden" width="1110" height="686" viewBox="0 0 1110 686">
<defs>
<linearGradient id="sky" x1="0" y1="0" x2="0" y2="1"><stop offset="0" stop-color="#a7d6f2"/><stop offset=".45" stop-color="#b4dbf3"/><stop offset=".8" stop-color="#c8e4f6"/><stop offset="1" stop-color="#d6e9f7"/></linearGradient>
<linearGradient id="gnd" x1="0" y1="0" x2="0" y2="1"><stop offset="0" stop-color="#5a5b5d"/><stop offset=".01" stop-color="#4d4f51"/><stop offset=".031" stop-color="#424447"/><stop offset=".063" stop-color="#383b40"/><stop offset=".094" stop-color="#30343a"/><stop offset=".125" stop-color="#2c3138"/><stop offset=".21" stop-color="#293037"/><stop offset="1" stop-color="#282f37"/></linearGradient>
<linearGradient id="rb" x1="0" y1="0" x2="1" y2="1"><stop offset="0" stop-color="#ff7070"/><stop offset=".3" stop-color="#ffeb70"/><stop offset=".5" stop-color="#9dff70"/><stop offset=".7" stop-color="#70deff"/><stop offset="1" stop-color="#ff70ac"/></linearGradient>
</defs>
<rect width="1110" height="207.5" fill="url(#sky)"/>
<rect y="207.5" width="1110" height="478.5" fill="url(#gnd)"/>
<polyline points="0.0,210.5 1109.0,210.5" fill="none" stroke="#cfd3d8" stroke-width="1" stroke-opacity="0.3" />
<polyline points="0.0,214.5 1109.0,213.7" fill="none" stroke="#cfd3d8" stroke-width="1" stroke-opacity="0.26" />
<polyline points="0.0,218.5 1109.0,216.9" fill="none" stroke="#cfd3d8" stroke-width="1" stroke-opacity="0.22" />
<polyline points="0.0,223.0 1109.0,220.6" fill="none" stroke="#cfd3d8" stroke-width="1" stroke-opacity="0.2" />
<polyline points="0.0,228.0 1109.0,224.8" fill="none" stroke="#cfd3d8" stroke-width="1" stroke-opacity="0.18" />
<polyline points="0.0,234.5 1109.0,229.7" fill="none" stroke="#cfd3d8" stroke-width="1" stroke-opacity="0.16" />
<polyline points="0.0,242.0 1109.0,235.6" fill="none" stroke="#cfd3d8" stroke-width="1" stroke-opacity="0.15" />
<polyline points="0.0,251.5 1109.0,242.7" fill="none" stroke="#cfd3d8" stroke-width="1" stroke-opacity="0.14" />
<polyline points="0.0,264.0 1109.0,251.2" fill="none" stroke="#cfd3d8" stroke-width="1" stroke-opacity="0.13" />
<polyline points="8.0,212.0 33.6,212.0" fill="none" stroke="#d8dbe0" stroke-width="1" stroke-opacity="0.175792" />
<polyline points="58.3,212.0 80.2,212.0" fill="none" stroke="#d8dbe0" stroke-width="1" stroke-opacity="0.166629" />
<polyline points="105.1,212.0 161.4,212.0" fill="none" stroke="#d8dbe0" stroke-width="1" stroke-opacity="0.350113" />
<polyline points="201.5,212.0 226.5,212.0" fill="none" stroke="#d8dbe0" stroke-width="1" stroke-opacity="0.28417" />
<polyline points="246.1,212.0 268.9,212.0" fill="none" stroke="#d8dbe0" stroke-width="1" stroke-opacity="0.176546" />
<polyline points="285.9,212.0 342.7,212.0" fill="none" stroke="#d8dbe0" stroke-width="1" stroke-opacity="0.35723" />
<polyline points="384.5,212.0 435.6,212.0" fill="none" stroke="#d8dbe0" stroke-width="1" stroke-opacity="0.198359" />
<polyline points="456.6,212.0 499.8,212.0" fill="none" stroke="#d8dbe0" stroke-width="1" stroke-opacity="0.332974" />
<polyline points="543.7,212.0 598.3,212.0" fill="none" stroke="#d8dbe0" stroke-width="1" stroke-opacity="0.17168" />
<polyline points="631.7,212.0 677.0,212.0" fill="none" stroke="#d8dbe0" stroke-width="1" stroke-opacity="0.276488" />
<polyline points="692.4,212.0 728.7,212.0" fill="none" stroke="#d8dbe0" stroke-width="1" stroke-opacity="0.172337" />
<polyline points="776.0,212.0 829.9,212.0" fill="none" stroke="#d8dbe0" stroke-width="1" stroke-opacity="0.28691" />
<polyline points="850.5,212.0 906.4,212.0" fill="none" stroke="#d8dbe0" stroke-width="1" stroke-opacity="0.293092" />
<polyline points="951.5,212.0 1004.7,212.0" fill="none" stroke="#d8dbe0" stroke-width="1" stroke-opacity="0.277093" />
<polyline points="1030.1,212.0 1072.0,212.0" fill="none" stroke="#d8dbe0" stroke-width="1" stroke-opacity="0.257761" />
<polyline points="1086.8,212.0 1115.5,212.0" fill="none" stroke="#d8dbe0" stroke-width="1" stroke-opacity="0.353148" />
<polyline points="8.0,215.5 25.1,215.5" fill="none" stroke="#d8dbe0" stroke-width="1" stroke-opacity="0.306588" />
<polyline points="44.9,215.5 83.9,215.5" fill="none" stroke="#d8dbe0" stroke-width="1" stroke-opacity="0.26781" />
<polyline points="106.3,215.5 166.2,215.5" fill="none" stroke="#d8dbe0" stroke-width="1" stroke-opacity="0.198893" />
<polyline points="191.5,215.5 215.7,215.5" fill="none" stroke="#d8dbe0" stroke-width="1" stroke-opacity="0.308166" />
<polyline points="235.3,215.5 266.3,215.5" fill="none" stroke="#d8dbe0" stroke-width="1" stroke-opacity="0.336736" />
<polyline points="287.7,215.5 327.9,215.5" fill="none" stroke="#d8dbe0" stroke-width="1" stroke-opacity="0.376079" />
<polyline points="340.1,215.5 357.9,215.5" fill="none" stroke="#d8dbe0" stroke-width="1" stroke-opacity="0.207217" />
<polyline points="398.0,215.5 440.7,215.5" fill="none" stroke="#d8dbe0" stroke-width="1" stroke-opacity="0.209354" />
<polyline points="462.6,215.5 485.6,215.5" fill="none" stroke="#d8dbe0" stroke-width="1" stroke-opacity="0.264755" />
<polyline points="495.4,215.5 541.8,215.5" fill="none" stroke="#d8dbe0" stroke-width="1" stroke-opacity="0.373982" />
<polyline points="589.9,215.5 638.0,215.5" fill="none" stroke="#d8dbe0" stroke-width="1" stroke-opacity="0.389967" />
<polyline points="646.7,215.5 674.7,215.5" fill="none" stroke="#d8dbe0" stroke-width="1" stroke-opacity="0.391502" />
<polyline points="715.3,215.5 748.8,215.5" fill="none" stroke="#d8dbe0" stroke-width="1" stroke-opacity="0.385827" />
<polyline points="782.8,215.5 834.6,215.5" fill="none" stroke="#d8dbe0" stroke-width="1" stroke-opacity="0.223353" />
<polyline points="850.7,215.5 885.6,215.5" fill="none" stroke="#d8dbe0" stroke-width="1" stroke-opacity="0.184109" />
<polyline points="909.7,215.5 968.0,215.5" fill="none" stroke="#d8dbe0" stroke-width="1" stroke-opacity="0.232827" />
<polyline points="976.4,215.5 993.4,215.5" fill="none" stroke="#d8dbe0" stroke-width="1" stroke-opacity="0.192392" />
<polyline points="1034.3,215.5 1065.6,215.5" fill="none" stroke="#d8dbe0" stroke-width="1" stroke-opacity="0.222584" />
<polyline points="1077.7,215.5 1136.9,215.5" fill="none" stroke="#d8dbe0" stroke-width="1" stroke-opacity="0.255988" />
<polyline points="0.0,323.2 278.5,275.5" fill="none" stroke="#b9bcc2" stroke-width="1" stroke-opacity="0.45" />
<polyline points="0.0,273.5 214.0,253.5 433.0,238.0" fill="none" stroke="#b9bcc2" stroke-width="1" stroke-opacity="0.3" />
<polyline points="0.0,296.0 293.0,268.0" fill="none" stroke="#b9bcc2" stroke-width="1" stroke-opacity="0.18" />
<polyline points="791.9,254.6 1109.0,361.0" fill="none" stroke="#b9bcc2" stroke-width="1" stroke-opacity="0.45" />
<polyline points="783.0,229.2 1109.0,271.2" fill="none" stroke="#b9bcc2" stroke-width="1" stroke-opacity="0.35" />
<polyline points="783.0,252.4 1109.0,258.0" fill="none" stroke="#b9bcc2" stroke-width="1" stroke-opacity="0.3" />
<polyline points="833.9,277.9 1109.0,283.4" fill="none" stroke="#b9bcc2" stroke-width="1" stroke-opacity="0.3" />
<polyline points="653.0,216.0 791.9,254.6" fill="none" stroke="#b9bcc2" stroke-width="1" stroke-opacity="0.3" />
<polyline points="0.0,514.7 251.0,336.0 435.0,207.0" fill="none" stroke="#9c5f7c" stroke-width="1" stroke-opacity="0.48" />
<polyline points="435.0,207.0 493.0,166.0 716.5,6.6 726.0,0.0" fill="none" stroke="#a9a0a8" stroke-width="1" stroke-opacity="0.5" />
<polyline points="2.0,0.0 54.0,207.0" fill="none" stroke="#c9a8c0" stroke-width="1" stroke-opacity="0.35" />
<polyline points="54.0,207.0 98.1,366.0 169.5,643.8" fill="none" stroke="#a35a78" stroke-width="1" stroke-opacity="0.55" />
<polyline points="169.5,643.8 122.0,686.0" fill="none" stroke="#a35a78" stroke-width="1" stroke-opacity="0.7" />
<polyline points="169.5,643.8 402.0,685.0" fill="none" stroke="#a35a78" stroke-width="1" stroke-opacity="0.7" />
<polyline points="961.0,0.0 924.0,206.0" fill="none" stroke="#d7a4b4" stroke-width="1" stroke-opacity="0.4" />
<polyline points="924.0,206.0 897.0,346.0 830.6,686.0" fill="none" stroke="#a03f66" stroke-width="1" stroke-opacity="0.85" />
<polyline points="53.0,685.0 476.0,343.0 643.0,207.0" fill="none" stroke="#6592d6" stroke-width="1.1" stroke-opacity="0.8" />
<polyline points="278.5,275.5 346.0,262.0 430.0,266.5" fill="none" stroke="#e6e6d8" stroke-width="1.6" stroke-opacity="0.95" />
<polyline points="723.0,271.5 833.9,274.1 893.7,294.9" fill="none" stroke="#e6e6d8" stroke-width="1.6" stroke-opacity="0.95" />
<defs><clipPath id="qc"><polygon points="173.6,37.1 825.6,-7.5 747.7,616.7 267,552.2"/></clipPath>
<linearGradient id="fl" gradientUnits="userSpaceOnUse" x1="226.7" y1="330.4" x2="228.4" y2="330.5"><stop offset="0" stop-opacity="1"/><stop offset="1" stop-opacity="0"/></linearGradient>
<linearGradient id="fr" gradientUnits="userSpaceOnUse" x1="780.1" y1="357.4" x2="777.6" y2="357.3"><stop offset="0" stop-opacity="1"/><stop offset="1" stop-opacity="0"/></linearGradient>
<mask id="ms" maskUnits="userSpaceOnUse" x="0" y="0" width="1110" height="207.5"><g>
<path fill="#fff" d="M144,39.1 162.1,-39.5 230.6,-46.4 276.8,30 253.1,105.7 188.7,108.3ZM174.4,194.8 192.5,129.4 256.4,127.4 298.5,194.2 275.6,257.1 215.3,255.9ZM270.1,116.1 294.6,40.9 367.2,36.2 410.5,111.1 380.3,183.3 312.4,183.9ZM291.3,266.8 314.9,204.3 382.2,204.2 421.9,269.8 393.5,329.6 330.1,326.7ZM383.6,22.7 416.7,-65 500.3,-73.3 544.5,11.7 504.5,95.8 427,98.9ZM397.5,193.8 428.5,122.1 505.2,119.7 545.5,193 508.8,261.6 437.2,260.2ZM523.4,107.2 564.4,23.6 653,18 693.6,101.1 645.6,181 563.8,181.7ZM526,272.2 563.7,204.1 644.6,204 681.9,275.8 638.4,340.7 563.2,337.3ZM675.1,2.8 729.9,-96.2 834.1,-106.6 874.1,-10.9 810.7,83.7 715.7,87.4ZM664.6,192.5 713.7,113.2 807.4,110.3 844.3,191.6 788.2,267 702,265.4Z"/>
<path fill-opacity="0.039" d="M144,39.1 162.1,-39.5 230.6,-46.4 276.8,30 253.1,105.7 188.7,108.3ZM174.4,194.8 192.5,129.4 256.4,127.4 298.5,194.2 275.6,257.1 215.3,255.9ZM270.1,116.1 294.6,40.9 367.2,36.2 410.5,111.1 380.3,183.3 312.4,183.9ZM291.3,266.8 314.9,204.3 382.2,204.2 421.9,269.8 393.5,329.6 330.1,326.7ZM383.6,22.7 416.7,-65 500.3,-73.3 544.5,11.7 504.5,95.8 427,98.9ZM397.5,193.8 428.5,122.1 505.2,119.7 545.5,193 508.8,261.6 437.2,260.2ZM523.4,107.2 564.4,23.6 653,18 693.6,101.1 645.6,181 563.8,181.7ZM526,272.2 563.7,204.1 644.6,204 681.9,275.8 638.4,340.7 563.2,337.3ZM675.1,2.8 729.9,-96.2 834.1,-106.6 874.1,-10.9 810.7,83.7 715.7,87.4ZM664.6,192.5 713.7,113.2 807.4,110.3 844.3,191.6 788.2,267 702,265.4Z"/>
<path fill-opacity="0.094" d="M144.6,39.1 162.6,-38.8 230.3,-45.5 276.1,30.1 252.7,105 188.9,107.6ZM175,194.8 193,130 256.1,128.1 297.8,194.2 275.2,256.5 215.5,255.3ZM270.8,116.1 295.1,41.6 366.9,37 409.8,111.2 379.9,182.6 312.7,183.2ZM292,266.8 315.4,205 381.9,204.9 421.2,269.8 393.1,329 330.4,326.1ZM384.3,22.7 417.2,-64.1 499.9,-72.3 543.7,11.8 504.1,95 427.4,98.1ZM398.2,193.7 428.9,122.8 504.8,120.5 544.8,193 508.4,261 437.5,259.6ZM524.2,107.1 564.8,24.5 652.5,18.9 692.7,101.2 645.2,180.2 564.2,181ZM526.8,272.2 564.1,204.8 644.1,204.7 681.1,275.7 638,340 563.6,336.7ZM676,2.7 730.3,-95.3 833.5,-105.5 873,-10.8 810.3,82.8 716.2,86.6ZM665.5,192.4 714.1,114 806.8,111.2 843.4,191.6 787.8,266.3 702.4,264.7Z"/>
<path fill-opacity="0.082" d="M145.2,39 163,-38 230.1,-44.7 275.4,30.1 252.3,104.3 189.1,106.9ZM175.6,194.8 193.4,130.7 255.9,128.8 297.2,194.2 274.8,255.9 215.7,254.7ZM271.5,116 295.5,42.3 366.6,37.9 409,111.2 379.5,181.9 312.9,182.6ZM292.6,266.8 315.8,205.6 381.7,205.6 420.5,269.7 392.7,328.4 330.6,325.6ZM385.1,22.6 417.6,-63.3 499.5,-71.4 542.8,11.8 503.7,94.3 427.7,97.3ZM398.9,193.7 429.4,123.5 504.4,121.2 544,193 508,260.3 437.9,259ZM525,107.1 565.2,25.3 652,19.8 691.8,101.2 644.8,179.5 564.6,180.2ZM527.5,272.2 564.5,205.5 643.7,205.5 680.3,275.7 637.7,339.4 564,336.1ZM677,2.6 730.7,-94.3 832.8,-104.4 872,-10.7 809.9,82 716.7,85.7ZM666.3,192.4 714.5,114.8 806.3,112 842.4,191.6 787.4,265.6 702.9,264Z"/>
<path fill-opacity="0.081" d="M145.9,39 163.5,-37.3 229.9,-43.8 274.7,30.2 251.8,103.6 189.3,106.2ZM176.2,194.8 193.8,131.4 255.7,129.5 296.5,194.2 274.4,255.3 215.9,254.2ZM272.1,116 296,43.1 366.3,38.7 408.3,111.2 379.1,181.3 313.2,181.9ZM293.2,266.8 316.2,206.3 381.4,206.3 419.8,269.7 392.3,327.8 330.9,325ZM385.8,22.6 418.1,-62.4 499,-70.4 542,11.9 503.3,93.5 428,96.5ZM399.6,193.7 429.8,124.2 504,122 543.2,193 507.6,259.6 438.2,258.3ZM525.8,107.1 565.7,26.1 651.5,20.7 690.9,101.2 644.5,178.7 565,179.5ZM528.3,272.2 564.9,206.2 643.2,206.2 679.5,275.7 637.3,338.7 564.3,335.5ZM677.9,2.6 731.1,-93.4 832.1,-103.4 870.9,-10.6 809.6,81.1 717.3,84.9ZM667.2,192.4 714.9,115.6 805.7,112.9 841.5,191.6 787.1,264.9 703.4,263.3Z"/>
<path fill-opacity="0.081" d="M146.5,39 164,-36.5 229.6,-43 274,30.2 251.4,102.9 189.5,105.5ZM176.8,194.8 194.3,132 255.5,130.2 295.9,194.2 274,254.6 216.1,253.6ZM272.8,116 296.4,43.8 366,39.5 407.5,111.2 378.7,180.6 313.4,181.2ZM293.8,266.8 316.6,206.9 381.1,206.9 419.1,269.7 391.9,327.2 331.1,324.4ZM386.6,22.5 418.5,-61.6 498.6,-69.5 541.1,11.9 502.9,92.7 428.4,95.8ZM400.3,193.7 430.2,125 503.7,122.8 542.4,193 507.2,258.9 438.5,257.7ZM526.6,107 566.1,26.9 651,21.6 690,101.3 644.1,178 565.4,178.7ZM529,272.2 565.3,206.9 642.8,206.9 678.6,275.7 637,338.1 564.7,334.9ZM678.8,2.5 731.6,-92.4 831.5,-102.3 869.9,-10.6 809.2,80.3 717.8,84ZM668,192.4 715.3,116.4 805.1,113.7 840.5,191.6 786.7,264.1 703.9,262.6Z"/>
<path fill-opacity="0.081" d="M147.1,38.9 164.5,-35.7 229.4,-42.1 273.3,30.3 251,102.2 189.7,104.8ZM177.4,194.8 194.7,132.7 255.2,130.9 295.2,194.3 273.6,254 216.3,253ZM273.5,116 296.9,44.6 365.7,40.3 406.8,111.3 378.3,179.9 313.7,180.5ZM294.5,266.8 317,207.6 380.8,207.6 418.4,269.7 391.6,326.6 331.3,323.9ZM387.4,22.5 419,-60.7 498.2,-68.5 540.2,12 502.5,92 428.7,95ZM401,193.7 430.6,125.7 503.3,123.5 541.6,193.1 506.8,258.3 438.8,257ZM527.4,107 566.5,27.8 650.5,22.5 689.1,101.3 643.7,177.2 565.8,178ZM529.7,272.3 565.7,207.6 642.3,207.7 677.8,275.7 636.6,337.4 565.1,334.2ZM679.8,2.4 732,-91.5 830.8,-101.2 868.8,-10.5 808.8,79.4 718.3,83.1ZM668.9,192.4 715.7,117.2 804.5,114.6 839.6,191.6 786.4,263.4 704.3,261.9Z"/>
<path fill-opacity="0.099" d="M147.7,38.9 164.9,-35 229.2,-41.3 272.6,30.3 250.5,101.6 189.9,104.1ZM178,194.8 195.1,133.4 255,131.6 294.6,194.3 273.2,253.4 216.5,252.4ZM274.1,115.9 297.3,45.3 365.4,41.1 406.1,111.3 377.9,179.2 313.9,179.9ZM295.1,266.8 317.4,208.2 380.5,208.3 417.8,269.7 391.2,326 331.6,323.3ZM388.1,22.4 419.5,-59.9 497.8,-67.6 539.4,12.1 502,91.2 429,94.2ZM401.7,193.7 431,126.4 502.9,124.3 540.9,193.1 506.4,257.6 439.1,256.4ZM528.2,107 566.9,28.6 650,23.4 688.2,101.3 643.3,176.5 566.2,177.3ZM530.5,272.3 566.1,208.3 641.9,208.4 677,275.6 636.2,336.8 565.5,333.6ZM680.7,2.4 732.4,-90.5 830.1,-100.1 867.7,-10.4 808.4,78.6 718.9,82.3ZM669.7,192.4 716,118 803.9,115.5 838.6,191.6 786,262.6 704.8,261.2Z"/>
<path fill-opacity="0.118" d="M148.7,38.8 165.7,-33.9 228.8,-40 271.6,30.4 249.9,100.5 190.2,103ZM178.8,194.8 195.8,134.4 254.7,132.7 293.6,194.3 272.6,252.5 216.7,251.5ZM275.1,115.9 298,46.4 364.9,42.3 405,111.3 377.3,178.2 314.3,178.9ZM296,266.9 318,209.2 380.1,209.3 416.7,269.7 390.6,325 331.9,322.5ZM389.3,22.3 420.2,-58.6 497.2,-66.1 538.1,12.1 501.4,90 429.5,93ZM402.7,193.7 431.7,127.5 502.4,125.5 539.7,193.1 505.9,256.6 439.6,255.4ZM529.4,106.9 567.6,29.8 649.3,24.8 686.9,101.4 642.7,175.3 566.8,176.2ZM531.6,272.3 566.6,209.4 641.2,209.5 675.8,275.6 635.7,335.8 566,332.7ZM682.1,2.3 733.1,-89.1 829.1,-98.5 866.2,-10.3 807.8,77.3 719.7,81ZM671,192.4 716.6,119.3 803,116.8 837.2,191.6 785.5,261.5 705.5,260.1Z"/>
<path fill-opacity="0.117" d="M149.6,38.7 166.4,-32.7 228.5,-38.7 270.5,30.5 249.2,99.5 190.4,101.9ZM179.7,194.8 196.4,135.4 254.4,133.7 292.6,194.3 272,251.6 217,250.6ZM276.1,115.9 298.7,47.5 364.5,43.5 403.9,111.4 376.6,177.2 314.7,177.8ZM297,266.9 318.6,210.2 379.7,210.3 415.7,269.6 390.1,324.1 332.3,321.6ZM390.4,22.3 420.8,-57.4 496.6,-64.7 536.9,12.2 500.8,88.9 430,91.9ZM403.8,193.7 432.3,128.6 501.8,126.6 538.5,193.1 505.3,255.6 440,254.5ZM530.6,106.9 568.2,31.1 648.5,26.1 685.5,101.4 642.1,174.2 567.4,175ZM532.7,272.3 567.2,210.5 640.6,210.6 674.5,275.6 635.2,334.8 566.6,331.8ZM683.5,2.2 733.7,-87.7 828.2,-96.8 864.6,-10.2 807.3,76 720.4,79.7ZM672.3,192.4 717.2,120.5 802.2,118 835.8,191.6 785,260.4 706.2,259.1Z"/>
<path fill-opacity="0.116" d="M150.6,38.7 167.1,-31.6 228.2,-37.5 269.5,30.5 248.6,98.4 190.7,100.9ZM180.6,194.8 197.1,136.3 254,134.7 291.7,194.3 271.4,250.6 217.3,249.7ZM277.1,115.8 299.3,48.7 364,44.7 402.7,111.4 376,176.1 315,176.8ZM297.9,266.9 319.2,211.2 379.2,211.2 414.7,269.6 389.5,323.2 332.7,320.8ZM391.6,22.2 421.5,-56.1 496,-63.3 535.6,12.3 500.1,87.7 430.5,90.7ZM404.9,193.7 432.9,129.7 501.2,127.8 537.4,193.1 504.7,254.6 440.5,253.5ZM531.8,106.9 568.9,32.3 647.8,27.5 684.2,101.5 641.5,173.1 568,173.9ZM533.8,272.3 567.8,211.6 639.9,211.7 673.3,275.6 634.6,333.8 567.1,330.9ZM684.9,2.1 734.3,-86.3 827.2,-95.2 863,-10.1 806.7,74.7 721.2,78.3ZM673.5,192.4 717.8,121.7 801.3,119.3 834.4,191.6 784.4,259.3 707,258Z"/>
<path fill-opacity="0.134" d="M151.5,38.6 167.8,-30.5 227.8,-36.2 268.4,30.6 247.9,97.4 191,99.8ZM181.5,194.8 197.7,137.3 253.7,135.8 290.7,194.3 270.8,249.7 217.6,248.8ZM278.1,115.8 300,49.8 363.6,45.9 401.6,111.4 375.4,175.1 315.4,175.8ZM298.8,266.9 319.8,212.1 378.8,212.2 413.7,269.6 388.9,322.3 333,319.9ZM392.7,22.1 422.2,-54.9 495.4,-61.9 534.3,12.4 499.5,86.6 431,89.5ZM405.9,193.7 433.5,130.8 500.7,128.9 536.2,193.1 504.1,253.6 441,252.5ZM533,106.8 569.5,33.5 647.1,28.8 682.8,101.5 641,172 568.6,172.8ZM534.9,272.4 568.4,212.6 639.2,212.8 672.1,275.5 634.1,332.8 567.7,330ZM686.3,2 735,-84.9 826.2,-93.6 861.4,-10 806.1,73.4 722,77ZM674.8,192.4 718.4,122.9 800.4,120.6 833,191.6 783.9,258.2 707.7,257Z"/>
<path fill-opacity="0.151" d="M152.8,38.5 168.7,-28.9 227.4,-34.5 267,30.7 247,96 191.4,98.4ZM182.7,194.8 198.6,138.7 253.2,137.2 289.4,194.3 270,248.5 218,247.6ZM279.5,115.7 300.9,51.2 363,47.5 400.2,111.5 374.6,173.7 315.9,174.5ZM300.1,267 320.7,213.4 378.3,213.6 412.3,269.5 388.2,321.1 333.5,318.8ZM394.2,22 423.1,-53.2 494.6,-60 532.6,12.5 498.7,85 431.7,87.9ZM407.3,193.7 434.4,132.2 499.9,130.5 534.6,193.1 503.4,252.3 441.6,251.3ZM534.6,106.8 570.3,35.2 646.1,30.6 681,101.6 640.2,170.5 569.5,171.3ZM536.4,272.4 569.2,214 638.3,214.2 670.5,275.5 633.4,331.5 568.4,328.8ZM688.2,1.9 735.8,-83 824.9,-91.5 859.3,-9.8 805.3,71.7 723.1,75.3ZM676.5,192.4 719.2,124.5 799.3,122.3 831.1,191.6 783.2,256.8 708.6,255.6Z"/>
<path fill-opacity="0.150" d="M154.1,38.4 169.7,-27.4 226.9,-32.9 265.6,30.8 246.2,94.6 191.8,97ZM183.9,194.8 199.4,140 252.8,138.6 288.1,194.3 269.2,247.3 218.4,246.5ZM280.8,115.7 301.8,52.7 362.4,49.1 398.7,111.5 373.8,172.4 316.4,173.1ZM301.3,267 321.5,214.7 377.7,214.9 410.9,269.5 387.4,319.9 334,317.7ZM395.8,21.9 424,-51.5 493.8,-58.1 530.9,12.6 497.8,83.5 432.4,86.4ZM408.8,193.7 435.2,133.7 499.2,132 533.1,193.1 502.6,250.9 442.2,250ZM536.3,106.7 571.2,36.8 645.1,32.4 679.2,101.7 639.4,168.9 570.3,169.8ZM537.9,272.4 570,215.5 637.4,215.7 668.8,275.5 632.7,330.2 569.2,327.5ZM690.1,1.7 736.7,-81.1 823.6,-89.3 857.2,-9.7 804.6,70 724.2,73.5ZM678.2,192.4 719.9,126.1 798.1,124 829.2,191.7 782.5,255.3 709.6,254.1Z"/>
<path fill-opacity="0.150" d="M155.4,38.4 170.6,-25.9 226.5,-31.2 264.3,30.9 245.3,93.2 192.2,95.5ZM185.1,194.8 200.3,141.3 252.4,139.9 286.8,194.3 268.4,246 218.7,245.3ZM282.2,115.7 302.7,54.2 361.8,50.7 397.2,111.6 372.9,171 316.9,171.7ZM302.6,267 322.3,216 377.1,216.2 409.6,269.5 386.6,318.7 334.5,316.5ZM397.3,21.8 425,-49.8 493,-56.2 529.2,12.8 497,82 433,84.8ZM410.2,193.7 436,135.1 498.5,133.5 531.5,193.1 501.8,249.6 442.8,248.7ZM537.9,106.6 572,38.4 644.1,34.2 677.4,101.7 638.6,167.4 571.1,168.3ZM539.4,272.5 570.7,216.9 636.6,217.1 667.2,275.4 631.9,328.9 569.9,326.3ZM692,1.6 737.5,-79.2 822.3,-87.2 855.1,-9.6 803.8,68.3 725.2,71.8ZM680,192.4 720.7,127.7 797,125.7 827.3,191.7 781.7,253.8 710.6,252.7Z"/>
<path fill-opacity="0.168" d="M156.6,38.3 171.6,-24.4 226,-29.5 262.9,31 244.4,91.8 192.6,94.1ZM186.3,194.8 201.2,142.6 251.9,141.3 285.5,194.3 267.6,244.8 219.1,244.1ZM283.5,115.6 303.6,55.7 361.2,52.3 395.8,111.6 372.1,169.6 317.4,170.4ZM303.8,267.1 323.1,217.3 376.6,217.5 408.2,269.5 385.9,317.5 334.9,315.4ZM398.8,21.7 425.9,-48.2 492.2,-54.4 527.6,12.9 496.1,80.4 433.7,83.2ZM411.6,193.7 436.9,136.6 497.7,135 530,193.1 501,248.2 443.5,247.4ZM539.5,106.6 572.9,40.1 643.2,36 675.7,101.8 637.8,165.9 571.9,166.8ZM540.9,272.5 571.5,218.3 635.7,218.5 665.6,275.4 631.2,327.6 570.7,325.1ZM693.9,1.5 738.4,-77.3 820.9,-85 853,-9.4 803,66.6 726.3,70ZM681.7,192.4 721.5,129.3 795.8,127.4 825.4,191.7 781,252.3 711.5,251.3Z"/>
<path fill-opacity="0.187" d="M158.2,38.2 172.7,-22.5 225.4,-27.4 261.1,31.1 243.3,90 193,92.3ZM187.8,194.8 202.2,144.3 251.4,143 283.9,194.3 266.6,243.2 219.6,242.6ZM285.2,115.5 304.7,57.5 360.4,54.3 393.9,111.7 371.1,167.9 318.1,168.7ZM305.4,267.1 324.1,218.9 375.9,219.2 406.5,269.4 384.9,316 335.5,314ZM400.8,21.6 427,-46.1 491.2,-52 525.4,13 495.1,78.5 434.5,81.3ZM413.4,193.7 437.9,138.4 496.8,136.9 528.1,193.1 500.1,246.5 444.2,245.7ZM541.5,106.5 573.9,42.1 642,38.2 673.4,101.9 636.9,164 572.9,165ZM542.8,272.6 572.5,220.1 634.6,220.3 663.5,275.3 630.3,325.9 571.6,323.5ZM696.2,1.3 739.4,-75 819.3,-82.4 850.4,-9.2 802,64.4 727.7,67.8ZM683.8,192.4 722.5,131.3 794.4,129.5 823.1,191.7 780.1,250.5 712.7,249.5Z"/>
<path fill-opacity="0.206" d="M159.8,38 173.9,-20.7 224.9,-25.3 259.4,31.2 242.2,88.3 193.5,90.5ZM189.3,194.8 203.3,145.9 250.8,144.8 282.3,194.3 265.6,241.7 220.1,241.1ZM286.9,115.5 305.8,59.4 359.7,56.3 392.1,111.8 370,166.2 318.7,167ZM307,267.1 325.1,220.5 375.2,220.8 404.8,269.4 384,314.5 336.2,312.6ZM402.7,21.4 428.2,-44 490.2,-49.7 523.3,13.2 494,76.5 435.4,79.3ZM415.1,193.7 438.9,140.2 495.9,138.8 526.1,193.1 499.1,244.8 445,244.1ZM543.6,106.4 575,44.2 640.7,40.5 671.2,101.9 635.9,162.1 573.9,163.1ZM544.6,272.6 573.4,221.8 633.5,222.1 661.5,275.3 629.4,324.3 572.6,322ZM698.6,1.2 740.5,-72.6 817.7,-79.7 847.8,-9.1 801.1,62.2 729,65.6ZM686,192.3 723.4,133.3 793,131.6 820.7,191.7 779.2,248.6 713.9,247.8Z"/>
<path fill-opacity="0.229" d="M161.7,37.9 175.3,-18.4 224.2,-22.9 257.3,31.4 240.9,86.2 194.1,88.4ZM191.1,194.8 204.6,147.9 250.2,146.8 280.4,194.3 264.4,239.8 220.6,239.3ZM288.9,115.4 307.1,61.6 358.8,58.7 389.9,111.9 368.8,164.1 319.5,164.9ZM308.9,267.2 326.3,222.5 374.3,222.8 402.8,269.3 382.8,312.6 336.9,310.8ZM405,21.3 429.5,-41.5 489,-46.9 520.8,13.3 492.8,74.2 436.4,76.9ZM417.3,193.7 440.2,142.4 494.8,141.1 523.8,193.1 497.9,242.8 446,242.2ZM546,106.4 576.2,46.6 639.3,43.1 668.5,102 634.7,159.9 575.2,160.8ZM546.9,272.6 574.6,223.9 632.2,224.3 659.1,275.2 628.3,322.3 573.7,320.1ZM701.4,1 741.7,-69.8 815.8,-76.6 844.7,-8.8 799.9,59.7 730.6,62.9ZM688.5,192.3 724.6,135.7 791.2,134.1 817.9,191.7 778.2,246.4 715.4,245.6Z"/>
<path fill-opacity="0.237" d="M163.6,37.8 176.7,-16.2 223.5,-20.4 255.3,31.5 239.6,84 194.7,86.2ZM192.9,194.7 205.9,149.9 249.5,148.9 278.4,194.3 263.2,238 221.2,237.5ZM290.9,115.3 308.4,63.8 357.9,61.1 387.7,111.9 367.6,162 320.2,162.8ZM310.8,267.2 327.5,224.4 373.5,224.7 400.8,269.3 381.7,310.8 337.6,309.1ZM407.3,21.1 430.9,-39 487.9,-44.1 518.3,13.5 491.5,71.9 437.4,74.5ZM419.4,193.6 441.4,144.5 493.7,143.3 521.5,193.1 496.8,240.8 446.9,240.2ZM548.5,106.3 577.5,49.1 637.9,45.7 665.9,102.1 633.5,157.6 576.4,158.5ZM549.1,272.7 575.7,226.1 630.9,226.4 656.6,275.2 627.2,320.3 574.8,318.3ZM704.3,0.8 743,-67 813.8,-73.4 841.5,-8.6 798.7,57.1 732.3,60.3ZM691.1,192.3 725.7,138.1 789.5,136.6 815.1,191.7 777.1,244.2 716.9,243.5Z"/>
<path fill-opacity="0.286" d="M165.6,37.7 178.1,-13.9 222.9,-17.9 253.2,31.7 238.2,81.9 195.3,84ZM194.7,194.7 207.1,151.8 248.9,150.9 276.5,194.3 262,236.1 221.8,235.7ZM293,115.3 309.8,66 357.1,63.4 385.6,112 366.3,160 321,160.8ZM312.6,267.3 328.8,226.3 372.7,226.7 398.8,269.2 380.6,309 338.4,307.4ZM409.6,20.9 432.2,-36.5 486.7,-41.3 515.8,13.7 490.2,69.6 438.4,72.1ZM421.6,193.6 442.7,146.7 492.6,145.6 519.2,193.2 495.6,238.8 447.9,238.2ZM550.9,106.2 578.8,51.5 636.4,48.4 663.2,102.2 632.4,155.3 577.7,156.3ZM551.4,272.8 576.9,228.2 629.6,228.6 654.2,275.1 626.2,318.3 576,316.4ZM707.2,0.6 744.2,-64.2 811.9,-70.2 838.4,-8.4 797.6,54.5 733.9,57.6ZM693.7,192.3 726.9,140.4 787.8,139.1 812.3,191.7 776,242 718.3,241.3Z"/>
<path fill-opacity="0.349" d="M168.1,37.5 180,-10.9 222,-14.6 250.5,31.8 236.5,79.1 196.1,81.1ZM197.1,194.7 208.8,154.5 248,153.6 274,194.4 260.4,233.6 222.6,233.2ZM295.7,115.2 311.5,68.9 355.9,66.6 382.7,112.1 364.6,157.2 322,158ZM315.2,267.3 330.4,228.9 371.6,229.3 396.1,269.2 379,306.5 339.3,305.1ZM412.7,20.7 434.1,-33.2 485.1,-37.7 512.5,13.9 488.5,66.4 439.8,68.9ZM424.4,193.6 444.3,149.5 491.2,148.6 516.2,193.2 494.1,236.1 449.1,235.6ZM554.2,106.1 580.4,54.7 634.5,51.9 659.7,102.3 630.8,152.3 579.3,153.2ZM554.4,272.8 578.4,231 627.8,231.4 651,275 624.7,315.7 577.5,313.9ZM711,0.3 745.9,-60.5 809.4,-66.1 834.3,-8.1 796,51 736.1,54ZM697.2,192.3 728.4,143.6 785.6,142.4 808.5,191.8 774.6,239 720.3,238.4Z"/>
<path fill-opacity="0.399" d="M170.7,37.3 181.9,-8 221.1,-11.3 247.7,32 234.7,76.3 196.9,78.2ZM199.5,194.7 210.6,157.1 247.1,156.4 271.4,194.4 258.7,231.1 223.4,230.8ZM298.4,115.1 313.3,71.8 354.7,69.7 379.8,112.2 363,154.4 323,155.2ZM317.7,267.4 332,231.5 370.5,231.8 393.4,269.1 377.5,304.1 340.3,302.8ZM415.8,20.5 435.9,-29.9 483.5,-34 509.1,14.1 486.8,63.3 441.2,65.7ZM427.3,193.6 446,152.4 489.8,151.5 513.1,193.2 492.5,233.3 450.4,232.9ZM557.5,105.9 582.1,58 632.6,55.4 656.2,102.5 629.2,149.2 581,150.1ZM557.4,272.9 580,233.8 626.1,234.2 647.8,275 623.3,313 579,311.4ZM714.8,0.1 747.6,-56.8 806.8,-61.9 830.1,-7.8 794.5,47.5 738.3,50.4ZM700.6,192.3 730,146.8 783.3,145.7 804.8,191.8 773.1,236 722.3,235.5Z"/>
<path fill-opacity="0.489" d="M173.3,37.1 183.8,-5 220.2,-8.1 245,32.2 232.9,73.4 197.6,75.3ZM201.9,194.7 212.3,159.7 246.3,159.1 268.9,194.4 257.1,228.6 224.1,228.4ZM301.1,115 315,74.8 353.6,72.8 376.9,112.3 361.3,151.7 324.1,152.4ZM320.2,267.4 333.6,234 369.4,234.4 390.7,269.1 376,301.7 341.3,300.4ZM418.9,20.3 437.7,-26.6 482,-30.3 505.8,14.4 485.1,60.2 442.5,62.4ZM430.2,193.6 447.6,155.3 488.3,154.5 510.1,193.2 490.9,230.6 451.7,230.3ZM560.8,105.8 583.8,61.2 630.7,58.8 652.7,102.6 627.6,146.1 582.7,147.1ZM560.4,273 581.5,236.6 624.4,237 644.6,274.9 621.8,310.3 580.6,308.9ZM718.6,-0.2 749.2,-53.1 804.3,-57.8 826,-7.6 792.9,44 740.5,46.8ZM704.1,192.3 731.5,150 781.1,149 801.1,191.8 771.7,233 724.3,232.6Z"/>
<path fill-opacity="0.766" d="M175.9,36.9 185.6,-2 219.3,-4.8 242.3,32.4 231.1,70.6 198.4,72.4ZM204.3,194.7 213.9,162.3 245.4,161.7 266.3,194.4 255.5,226.1 224.9,225.9ZM303.8,114.9 316.8,77.7 352.4,75.9 374,112.4 359.6,148.9 325.1,149.6ZM322.8,267.5 335.2,236.6 368.3,237 388,269 374.4,299.2 342.3,298.1ZM422.1,20.1 439.5,-23.3 480.5,-26.7 502.5,14.6 483.4,57.1 443.9,59.2ZM433,193.6 449.3,158.1 486.9,157.5 507,193.2 489.4,227.9 453,227.6ZM564.1,105.7 585.5,64.4 628.8,62.3 649.2,102.7 626,143.1 584.3,144ZM563.5,273 583,239.4 622.7,239.8 641.4,274.8 620.3,307.7 582.1,306.4ZM722.5,-0.5 750.9,-49.4 801.8,-53.7 821.9,-7.3 791.3,40.5 742.7,43.1ZM707.6,192.2 733,153.1 778.9,152.3 797.4,191.8 770.2,230 726.2,229.7Z"/>
<path fill-opacity="1.000" d="M179.1,36.7 187.9,1.7 218.2,-0.8 238.9,32.6 228.9,67.1 199.4,68.7ZM207.3,194.7 216.1,165.6 244.3,165.1 263.1,194.4 253.4,223 225.9,222.8ZM307.3,114.8 319,81.3 351,79.8 370.4,112.5 357.5,145.4 326.4,146.1ZM326,267.6 337.2,239.8 366.9,240.2 384.7,268.9 372.5,296.1 343.5,295.2ZM426,19.8 441.7,-19.2 478.5,-22.2 498.4,14.9 481.2,53.1 445.7,55.1ZM436.6,193.6 451.3,161.7 485.1,161.1 503.2,193.2 487.4,224.5 454.6,224.3ZM568.2,105.6 587.5,68.5 626.5,66.6 644.8,102.9 624.1,139.2 586.5,140.1ZM567.3,273.1 584.9,242.9 620.6,243.3 637.4,274.7 618.5,304.3 584,303.2ZM727.3,-0.8 753,-44.8 798.7,-48.5 816.8,-6.9 789.3,36.1 745.5,38.6ZM712,192.2 734.9,157 776.1,156.4 792.8,191.8 768.4,226.2 728.7,226Z"/>
<path d="M186.3,36.2 193,9.8 215.8,8 231.4,33.1 224,59.2 201.6,60.5ZM214,194.6 220.7,172.7 242,172.4 256.2,194.4 248.9,216.1 228.1,216ZM314.8,114.5 323.8,89.3 347.9,88.2 362.5,112.8 352.9,137.7 329.3,138.3ZM333,267.7 341.6,246.8 364,247.1 377.4,268.7 368.3,289.4 346.3,288.7ZM434.6,19.2 446.6,-10.2 474.3,-12.3 489.3,15.5 476.5,44.5 449.5,46ZM444.6,193.5 455.8,169.5 481.2,169.2 494.9,193.3 483.1,216.9 458.2,216.8ZM577.4,105.2 592.1,77.3 621.4,76 635.2,103.2 619.7,130.7 591.2,131.5ZM575.7,273.3 589.1,250.5 615.9,250.9 628.6,274.5 614.5,297 588.3,296.1ZM738,-1.5 757.5,-34.7 791.9,-37.4 805.6,-6.2 785,26.5 751.7,28.4ZM721.6,192.2 739.1,165.7 770.1,165.2 782.7,191.9 764.4,217.9 734.3,217.8Z"/>
<polygon points="166.3,33.3 174.7,32.7 268.9,554.8 262.3,554" fill="url(#fl)"/><polygon points="836.6,-13.8 823.2,-12.8 745.3,619.2 754.5,620.4" fill="url(#fr)"/></g></mask>
<mask id="mg" maskUnits="userSpaceOnUse" x="0" y="207.5" width="1110" height="478.5"><g>
<path fill="#fff" d="M174.4,194.8 192.5,129.4 256.4,127.4 298.5,194.2 275.6,257.1 215.3,255.9ZM200.7,329.1 218.6,274.1 278.4,275.7 317,334.8 295,387.6 238.4,383.6ZM223.5,446.2 241.2,399.5 297.4,403.7 333.1,456.5 311.9,501.2 258.5,495.2ZM243.7,549.1 261,509.1 314,515.4 347.2,563 326.7,601.1 276.2,593.6ZM291.3,266.8 314.9,204.3 382.2,204.2 421.9,269.8 393.5,329.6 330.1,326.7ZM309.6,396.7 332.3,344.3 395.1,347.5 431.6,405.5 404.7,455.6 345.5,450.1ZM325.6,509.8 347.4,465.4 406.1,471.1 440,523 414.6,565.3 358.9,557.9ZM397.5,193.8 428.5,122.1 505.2,119.7 545.5,193 508.8,261.6 437.2,260.2ZM409.3,339.3 438.5,279.9 509.3,281.8 546.4,346 512.3,402.7 445.9,398.1ZM419.5,464.7 447,415 512.8,420 547.1,476.8 515.4,524.1 453.5,517.2ZM428.4,573.9 454.4,531.9 515.8,539.1 547.8,589.9 518.1,629.8 460,621.1ZM526,272.2 563.7,204.1 644.6,204 681.9,275.8 638.4,340.7 563.2,337.3ZM528.3,412.5 563.2,356.3 637.5,360.1 672.1,422.9 632.2,476.4 562.7,470.1ZM530.3,533.3 562.7,486.4 631.5,493.1 663.7,548.7 627,593.2 562.3,584.7ZM664.6,192.5 713.7,113.2 807.4,110.3 844.3,191.6 788.2,267 702,265.4ZM655.9,351.3 700.3,286.9 785.4,289.2 819.7,359.3 769.3,420.5 690.4,415ZM648.4,486.4 689,433.3 767,439.2 798.9,500.6 753.2,550.8 680.6,542.7ZM642,602.5 679.4,558.4 751.3,566.8 781.2,621.2 739.5,662.9 672.1,652.8Z"/>
<path fill-opacity="0.082" d="M178,194.8 195.1,133.4 255,131.6 294.6,194.3 273.2,253.4 216.5,252.4ZM204,329.3 221,277.6 277.1,279.2 313.4,334.6 292.8,384.3 239.5,380.7ZM226.7,446.5 243.4,402.6 296.1,406.7 329.7,456.2 309.8,498.3 259.5,492.7ZM246.6,549.5 263,512 312.7,517.9 343.9,562.5 324.8,598.4 277.2,591.4ZM295.1,266.8 317.4,208.2 380.5,208.3 417.8,269.7 391.2,326 331.6,323.3ZM313.1,396.9 334.6,347.7 393.4,350.9 427.8,405.2 402.7,452.3 346.8,447.3ZM328.9,510.2 349.5,468.5 404.6,473.9 436.4,522.5 412.6,562.4 360.2,555.5ZM401.7,193.7 431,126.4 502.9,124.3 540.9,193.1 506.4,257.6 439.1,256.4ZM413.2,339.5 440.8,283.8 507.2,285.6 542.1,345.8 510.2,399.1 447.7,394.9ZM423.2,465.1 449.1,418.4 510.8,423.1 543.1,476.4 513.4,521 455.1,514.5ZM431.8,574.3 456.4,534.9 514,541.8 544,589.4 516.2,626.9 461.6,618.8ZM530.5,272.3 566.1,208.3 641.9,208.4 677,275.6 636.2,336.8 565.5,333.6ZM532.4,412.8 565.3,360 635.1,363.7 667.6,422.6 630.3,473 564.8,467ZM534.1,533.8 564.7,489.7 629.2,496.1 659.5,548.2 625.1,590.1 564.2,582.2ZM669.7,192.4 716,118 803.9,115.5 838.6,191.6 786,262.6 704.8,261.2ZM660.5,351.6 702.5,291.1 782.3,293.3 814.5,359.1 767.3,416.7 693,411.6ZM652.7,486.8 691,437 764.1,442.6 794.2,500.1 751.4,547.5 682.9,539.8ZM646,603.1 681.2,561.6 748.7,569.6 776.8,620.6 737.7,659.9 674.3,650.4Z"/>
<path fill-opacity="0.108" d="M179.1,194.8 196,134.7 254.6,133 293.3,194.3 272.4,252.2 216.8,251.2ZM205.1,329.4 221.8,278.8 276.6,280.4 312.2,334.6 292,383.2 239.8,379.7ZM227.8,446.6 244.1,403.7 295.7,407.7 328.5,456.1 309.1,497.3 259.9,491.8ZM247.6,549.6 263.7,512.9 312.3,518.7 342.8,562.4 324.1,597.6 277.6,590.6ZM296.3,266.9 318.2,209.5 379.9,209.6 416.4,269.6 390.4,324.7 332.1,322.2ZM314.3,397 335.3,348.9 392.9,352 426.5,405.1 402,451.3 347.3,446.3ZM330,510.3 350.2,469.5 404.1,474.9 435.2,522.4 412,561.4 360.6,554.7ZM403.1,193.7 431.9,127.9 502.2,125.9 539.3,193.1 505.7,256.3 439.7,255.1ZM414.5,339.6 441.6,285.1 506.5,286.9 540.6,345.7 509.5,398 448.3,393.8ZM424.4,465.2 449.9,419.5 510.2,424.2 541.8,476.3 512.8,519.9 455.7,513.6ZM433,574.5 457,535.9 513.4,542.6 542.8,589.2 515.6,626 462.1,618ZM532,272.3 566.8,209.8 641,209.8 675.4,275.6 635.5,335.5 566.2,332.4ZM533.8,412.9 566,361.3 634.2,364.9 666,422.5 629.6,471.8 565.5,466ZM535.4,533.9 565.4,490.8 628.5,497.1 658.1,548 624.5,589.1 564.9,581.3ZM671.4,192.4 716.8,119.7 802.8,117.2 836.7,191.6 785.3,261.2 705.8,259.8ZM662.1,351.6 703.2,292.5 781.3,294.7 812.8,359 766.6,415.4 693.9,410.5ZM654.1,486.9 691.7,438.2 763.2,443.7 792.6,500 750.8,546.3 683.7,538.9ZM647.3,603.2 681.8,562.7 747.8,570.6 775.4,620.4 737.1,658.9 675,649.6Z"/>
<path fill-opacity="0.110" d="M180.3,194.8 196.8,136 254.1,134.4 292,194.3 271.6,250.9 217.2,250ZM206.2,329.4 222.6,280 276.2,281.5 311,334.5 291.3,382.1 240.2,378.7ZM228.8,446.7 244.9,404.7 295.3,408.6 327.4,456 308.4,496.3 260.3,491ZM248.6,549.8 264.4,513.9 311.9,519.5 341.8,562.2 323.5,596.7 277.9,589.9ZM297.6,266.9 319,210.8 379.4,210.9 415,269.6 389.7,323.5 332.5,321.1ZM315.5,397.1 336.1,350 392.4,353.1 425.2,405 401.3,450.2 347.8,445.4ZM331.1,510.4 350.9,470.6 403.6,475.8 434.1,522.3 411.3,560.4 361.1,553.9ZM404.5,193.7 432.7,129.3 501.4,127.4 537.7,193.1 504.9,254.9 440.3,253.8ZM415.9,339.6 442.3,286.3 505.8,288.2 539.2,345.7 508.8,396.8 448.8,392.7ZM425.6,465.3 450.6,420.7 509.6,425.2 540.5,476.2 512.1,518.9 456.2,512.7ZM434.1,574.6 457.7,537 512.8,543.5 541.6,589.1 515,625 462.6,617.3ZM533.5,272.3 567.6,211.2 640.1,211.3 673.7,275.6 634.8,334.1 566.9,331.2ZM535.2,413 566.8,362.5 633.4,366.1 664.5,422.4 628.9,470.7 566.2,465ZM536.7,534.1 566,491.9 627.7,498 656.7,547.9 623.9,588.1 565.5,580.5ZM673.1,192.4 717.6,121.3 801.6,118.9 834.8,191.6 784.6,259.7 706.7,258.4ZM663.6,351.7 703.9,293.9 780.2,296.1 811.1,358.9 766,414.1 694.7,409.3ZM655.6,487 692.3,439.4 762.3,444.8 791,499.9 750.2,545.2 684.5,537.9ZM648.6,603.4 682.5,563.8 747,571.5 773.9,620.2 736.6,657.9 675.7,648.9Z"/>
<path fill-opacity="0.113" d="M181.5,194.8 197.7,137.3 253.7,135.8 290.7,194.3 270.8,249.7 217.6,248.8ZM207.4,329.5 223.4,281.2 275.8,282.7 309.7,334.5 290.6,381 240.6,377.7ZM229.9,446.8 245.6,405.8 294.9,409.6 326.3,455.9 307.8,495.3 260.6,490.1ZM249.6,549.9 265,514.8 311.5,520.4 340.7,562.1 322.9,595.8 278.3,589.2ZM298.8,266.9 319.8,212.1 378.8,212.2 413.7,269.6 388.9,322.3 333,319.9ZM316.7,397.2 336.8,351.2 391.8,354.2 424,404.9 400.6,449.1 348.2,444.4ZM332.2,510.5 351.5,471.6 403.1,476.7 432.9,522.1 410.7,559.5 361.5,553.1ZM405.9,193.7 433.5,130.8 500.7,128.9 536.2,193.1 504.1,253.6 441,252.5ZM417.2,339.7 443.1,287.6 505.1,289.4 537.8,345.6 508.1,395.6 449.4,391.7ZM426.9,465.4 451.3,421.8 508.9,426.3 539.1,476 511.4,517.8 456.8,511.8ZM435.3,574.8 458.3,538 512.2,544.4 540.3,588.9 514.4,624.1 463.1,616.5ZM534.9,272.4 568.4,212.6 639.2,212.8 672.1,275.5 634.1,332.8 567.7,330ZM536.6,413.1 567.5,363.8 632.6,367.3 663,422.3 628.3,469.5 566.9,464ZM538,534.2 566.7,493 627,499 655.3,547.7 623.2,587 566.2,579.6ZM674.8,192.4 718.4,122.9 800.4,120.6 833,191.6 783.9,258.2 707.7,257ZM665.2,351.8 704.6,295.3 779.2,297.5 809.4,358.8 765.3,412.8 695.6,408.2ZM657,487.2 693,440.6 761.3,446 789.5,499.7 749.5,544.1 685.3,537ZM650,603.6 683.1,564.9 746.1,572.4 772.5,620 736,656.9 676.5,648.1Z"/>
<path fill-opacity="0.115" d="M182.7,194.8 198.6,138.7 253.2,137.2 289.4,194.3 270,248.5 218,247.6ZM208.5,329.5 224.1,282.3 275.4,283.8 308.5,334.4 289.8,379.9 240.9,376.7ZM230.9,446.9 246.3,406.8 294.5,410.6 325.1,455.8 307.1,494.3 261,489.3ZM250.6,550 265.7,515.8 311.1,521.2 339.6,562 322.2,594.9 278.6,588.4ZM300.1,267 320.7,213.4 378.3,213.6 412.3,269.5 388.2,321.1 333.5,318.8ZM317.8,397.3 337.6,352.3 391.3,355.3 422.7,404.9 399.9,448 348.7,443.5ZM333.3,510.7 352.2,472.6 402.6,477.7 431.7,522 410,558.5 361.9,552.3ZM407.3,193.7 434.4,132.2 499.9,130.5 534.6,193.1 503.4,252.3 441.6,251.3ZM418.5,339.8 443.9,288.9 504.4,290.7 536.3,345.5 507.3,394.4 450,390.6ZM428.1,465.5 452,422.9 508.3,427.3 537.8,475.9 510.8,516.7 457.3,510.9ZM436.4,574.9 459,539 511.6,545.3 539.1,588.7 513.8,623.1 463.7,615.7ZM536.4,272.4 569.2,214 638.3,214.2 670.5,275.5 633.4,331.5 568.4,328.8ZM537.9,413.2 568.2,365 631.8,368.5 661.5,422.2 627.6,468.3 567.6,463ZM539.2,534.4 567.4,494.1 626.3,500 653.9,547.6 622.6,586 566.8,578.8ZM676.5,192.4 719.2,124.5 799.3,122.3 831.1,191.6 783.2,256.8 708.6,255.6ZM666.8,351.9 705.3,296.7 778.1,298.8 807.6,358.7 764.6,411.5 696.5,407ZM658.5,487.3 693.7,441.9 760.4,447.1 787.9,499.6 748.9,542.9 686.1,536ZM651.3,603.8 683.7,566 745.3,573.3 771,619.8 735.4,655.8 677.2,647.3Z"/>
<path fill-opacity="0.118" d="M183.9,194.8 199.4,140 252.8,138.6 288.1,194.3 269.2,247.3 218.4,246.5ZM209.6,329.6 224.9,283.5 274.9,285 307.3,334.3 289.1,378.8 241.3,375.7ZM232,447 247,407.9 294,411.6 324,455.7 306.4,493.4 261.4,488.4ZM251.6,550.2 266.4,516.7 310.7,522 338.6,561.8 321.6,594 279,587.7ZM301.3,267 321.5,214.7 377.7,214.9 410.9,269.5 387.4,319.9 334,317.7ZM319,397.3 338.3,353.5 390.8,356.4 421.4,404.8 399.2,447 349.1,442.5ZM334.4,510.8 352.9,473.7 402.1,478.6 430.5,521.9 409.4,557.5 362.4,551.5ZM408.8,193.7 435.2,133.7 499.2,132 533.1,193.1 502.6,250.9 442.2,250ZM419.8,339.8 444.6,290.1 503.8,291.9 534.9,345.4 506.6,393.2 450.6,389.5ZM429.3,465.6 452.7,424.1 507.6,428.4 536.5,475.8 510.1,515.7 457.9,510ZM437.6,575.1 459.7,540 511,546.2 537.8,588.6 513.1,622.2 464.2,615ZM537.9,272.4 570,215.5 637.4,215.7 668.8,275.5 632.7,330.2 569.2,327.5ZM539.3,413.3 568.9,366.3 631,369.7 660,422.1 626.9,467.2 568.2,462ZM540.5,534.5 568,495.2 625.5,501 652.5,547.4 622,585 567.4,577.9ZM678.2,192.4 719.9,126.1 798.1,124 829.2,191.7 782.5,255.3 709.6,254.1ZM668.3,351.9 706.1,298 777.1,300.2 805.9,358.7 764,410.3 697.3,405.9ZM659.9,487.4 694.3,443.1 759.5,448.2 786.3,499.4 748.3,541.8 686.9,535.1ZM652.7,604 684.3,567 744.4,574.3 769.6,619.6 734.8,654.8 677.9,646.5Z"/>
<path fill-opacity="0.121" d="M185.1,194.8 200.3,141.3 252.4,139.9 286.8,194.3 268.4,246 218.7,245.3ZM210.7,329.6 225.7,284.7 274.5,286.2 306.1,334.3 288.4,377.7 241.7,374.6ZM233,447.1 247.8,408.9 293.6,412.5 322.9,455.6 305.7,492.4 261.7,487.6ZM252.6,550.3 267.1,517.7 310.3,522.9 337.5,561.7 321,593.1 279.4,587ZM302.6,267 322.3,216 377.1,216.2 409.6,269.5 386.6,318.7 334.5,316.5ZM320.2,397.4 339.1,354.6 390.2,357.5 420.2,404.7 398.5,445.9 349.6,441.6ZM335.5,510.9 353.6,474.7 401.6,479.5 429.3,521.7 408.7,556.6 362.8,550.6ZM410.2,193.7 436,135.1 498.5,133.5 531.5,193.1 501.8,249.6 442.8,248.7ZM421.1,339.9 445.4,291.4 503.1,293.2 533.5,345.4 505.9,392 451.2,388.4ZM430.5,465.8 453.4,425.2 507,429.4 535.2,475.7 509.5,514.6 458.4,509.1ZM438.7,575.3 460.3,541 510.4,547 536.6,588.4 512.5,621.2 464.7,614.2ZM539.4,272.5 570.7,216.9 636.6,217.1 667.2,275.4 631.9,328.9 569.9,326.3ZM540.7,413.4 569.6,367.5 630.2,370.9 658.5,422 626.3,466 568.9,461ZM541.8,534.7 568.7,496.3 624.8,502 651.2,547.2 621.4,583.9 568.1,577.1ZM680,192.4 720.7,127.7 797,125.7 827.3,191.7 781.7,253.8 710.6,252.7ZM669.9,352 706.8,299.4 776.1,301.6 804.2,358.6 763.3,409 698.2,404.7ZM661.3,487.6 695,444.3 758.5,449.3 784.8,499.3 747.7,540.7 687.7,534.1ZM654,604.1 685,568.1 743.6,575.2 768.1,619.5 734.2,653.8 678.7,645.7Z"/>
<path fill-opacity="0.139" d="M186.3,194.8 201.2,142.6 251.9,141.3 285.5,194.3 267.6,244.8 219.1,244.1ZM211.8,329.7 226.5,285.8 274.1,287.3 304.9,334.2 287.6,376.6 242.1,373.6ZM234.1,447.2 248.5,410 293.2,413.5 321.7,455.5 305,491.4 262.1,486.7ZM253.6,550.4 267.7,518.6 309.9,523.7 336.4,561.5 320.3,592.2 279.7,586.2ZM303.8,267.1 323.1,217.3 376.6,217.5 408.2,269.5 385.9,317.5 334.9,315.4ZM321.3,397.5 339.8,355.8 389.7,358.6 418.9,404.6 397.7,444.8 350.1,440.6ZM336.6,511.1 354.3,475.7 401.1,480.4 428.1,521.6 408.1,555.6 363.3,549.8ZM411.6,193.7 436.9,136.6 497.7,135 530,193.1 501,248.2 443.5,247.4ZM422.4,340 446.1,292.7 502.4,294.4 532.1,345.3 505.2,390.8 451.8,387.4ZM431.8,465.9 454.1,426.3 506.4,430.5 533.8,475.5 508.8,513.6 459,508.1ZM439.9,575.4 461,542 509.8,547.9 535.4,588.2 511.9,620.3 465.2,613.4ZM540.9,272.5 571.5,218.3 635.7,218.5 665.6,275.4 631.2,327.6 570.7,325.1ZM542.1,413.5 570.3,368.7 629.4,372.1 657,421.9 625.6,464.9 569.6,459.9ZM543.1,534.8 569.3,497.4 624,503 649.8,547.1 620.8,582.9 568.7,576.2ZM681.7,192.4 721.5,129.3 795.8,127.4 825.4,191.7 781,252.3 711.5,251.3ZM671.5,352.1 707.5,300.8 775,302.9 802.5,358.5 762.7,407.7 699.1,403.5ZM662.8,487.7 695.7,445.5 757.6,450.4 783.2,499.1 747.1,539.5 688.5,533.2ZM655.3,604.3 685.6,569.2 742.7,576.1 766.7,619.3 733.7,652.8 679.4,644.9Z"/>
<path fill-opacity="0.158" d="M187.8,194.8 202.2,144.3 251.4,143 283.9,194.3 266.6,243.2 219.6,242.6ZM213.2,329.8 227.5,287.3 273.5,288.8 303.4,334.2 286.7,375.2 242.5,372.4ZM235.4,447.3 249.4,411.3 292.7,414.7 320.3,455.3 304.2,490.1 262.5,485.6ZM254.9,550.6 268.6,519.8 309.4,524.7 335.1,561.4 319.5,591.1 280.2,585.3ZM305.4,267.1 324.1,218.9 375.9,219.2 406.5,269.4 384.9,316 335.5,314ZM322.8,397.6 340.8,357.2 389.1,360 417.3,404.5 396.9,443.5 350.7,439.4ZM338,511.2 355.2,477 400.4,481.6 426.6,521.4 407.3,554.4 363.8,548.8ZM413.4,193.7 437.9,138.4 496.8,136.9 528.1,193.1 500.1,246.5 444.2,245.7ZM424.1,340 447.1,294.3 501.5,296 530.3,345.2 504.3,389.4 452.5,386ZM433.3,466 455,427.7 505.6,431.8 532.2,475.4 508,512.3 459.7,507ZM441.3,575.6 461.8,543.3 509.1,549 533.8,588 511.1,619.1 465.9,612.5ZM542.8,272.6 572.5,220.1 634.6,220.3 663.5,275.3 630.3,325.9 571.6,323.5ZM543.8,413.6 571.2,370.3 628.4,373.5 655.2,421.7 624.8,463.4 570.5,458.7ZM544.7,535 570.2,498.8 623.1,504.2 648,546.9 620,581.6 569.5,575.2ZM683.8,192.4 722.5,131.3 794.4,129.5 823.1,191.7 780.1,250.5 712.7,249.5ZM673.4,352.2 708.4,302.6 773.8,304.6 800.4,358.4 761.8,406.1 700.2,402.1ZM664.6,487.9 696.5,447 756.4,451.8 781.2,498.9 746.3,538.1 689.5,531.9ZM657,604.5 686.4,570.5 741.7,577.3 764.9,619 732.9,651.5 680.3,643.8Z"/>
<path fill-opacity="0.178" d="M189.3,194.8 203.3,145.9 250.8,144.8 282.3,194.3 265.6,241.7 220.1,241.1ZM214.6,329.8 228.5,288.8 273,290.2 301.9,334.1 285.8,373.9 243,371.1ZM236.7,447.4 250.3,412.6 292.2,416 318.9,455.2 303.3,488.9 263,484.6ZM256.2,550.8 269.4,521 308.9,525.8 333.8,561.2 318.7,589.9 280.6,584.4ZM307,267.1 325.1,220.5 375.2,220.8 404.8,269.4 384,314.5 336.2,312.6ZM324.3,397.7 341.7,358.6 388.4,361.3 415.7,404.4 396,442.1 351.2,438.2ZM339.4,511.4 356,478.3 399.8,482.7 425.2,521.2 406.4,553.2 364.4,547.8ZM415.1,193.7 438.9,140.2 495.9,138.8 526.1,193.1 499.1,244.8 445,244.1ZM425.7,340.1 448.1,295.8 500.7,297.5 528.5,345.1 503.4,387.9 453.3,384.6ZM434.8,466.2 455.9,429.1 504.8,433.1 530.5,475.2 507.1,510.9 460.3,505.9ZM442.8,575.8 462.6,544.5 508.3,550.1 532.3,587.8 510.4,617.9 466.5,611.5ZM544.6,272.6 573.4,221.8 633.5,222.1 661.5,275.3 629.4,324.3 572.6,322ZM545.5,413.8 572.1,371.8 627.4,375 653.3,421.6 623.9,461.9 571.4,457.4ZM546.3,535.2 571,500.2 622.2,505.4 646.3,546.7 619.2,580.3 570.4,574.1ZM686,192.3 723.4,133.3 793,131.6 820.7,191.7 779.2,248.6 713.9,247.8ZM675.4,352.3 709.3,304.3 772.5,306.3 798.2,358.3 761,404.5 701.3,400.6ZM666.4,488.1 697.3,448.5 755.3,453.2 779.3,498.7 745.5,536.7 690.5,530.7ZM658.7,604.8 687.1,571.9 740.6,578.4 763.1,618.8 732.2,650.3 681.3,642.8Z"/>
<path fill-opacity="0.201" d="M191.1,194.8 204.6,147.9 250.2,146.8 280.4,194.3 264.4,239.8 220.6,239.3ZM216.3,329.9 229.7,290.5 272.4,291.9 300.1,334 284.6,372.2 243.6,369.6ZM238.3,447.6 251.4,414.2 291.6,417.4 317.2,455 302.3,487.4 263.6,483.3ZM257.7,551 270.4,522.4 308.3,527 332.2,561 317.8,588.6 281.1,583.3ZM308.9,267.2 326.3,222.5 374.3,222.8 402.8,269.3 382.8,312.6 336.9,310.8ZM326.1,397.8 342.8,360.4 387.6,363 413.8,404.2 394.9,440.5 351.9,436.8ZM341,511.6 357.1,479.8 399.1,484.1 423.4,521 405.5,551.7 365.1,546.6ZM417.3,193.7 440.2,142.4 494.8,141.1 523.8,193.1 497.9,242.8 446,242.2ZM427.7,340.2 449.2,297.7 499.7,299.4 526.4,345 502.3,386.1 454.1,383ZM436.7,466.3 456.9,430.8 503.8,434.6 528.6,475 506.1,509.3 461.2,504.5ZM444.5,576 463.6,546 507.4,551.4 530.4,587.6 509.4,616.5 467.3,610.4ZM546.9,272.6 574.6,223.9 632.2,224.3 659.1,275.2 628.3,322.3 573.7,320.1ZM547.6,413.9 573.2,373.7 626.2,376.8 651.1,421.4 622.9,460.2 572.4,455.8ZM548.2,535.4 572,501.8 621.1,506.9 644.2,546.4 618.3,578.8 571.3,572.8ZM688.5,192.3 724.6,135.7 791.2,134.1 817.9,191.7 778.2,246.4 715.4,245.6ZM677.7,352.4 710.3,306.4 771,308.4 795.7,358.2 760,402.5 702.6,398.9ZM668.6,488.3 698.3,450.4 753.9,454.9 776.9,498.5 744.6,535 691.7,529.3ZM660.7,605 688.1,573.5 739.4,579.8 760.9,618.5 731.3,648.8 682.4,641.6Z"/>
<path fill-opacity="0.210" d="M192.9,194.7 205.9,149.9 249.5,148.9 278.4,194.3 263.2,238 221.2,237.5ZM218,330 230.8,292.3 271.7,293.6 298.3,333.9 283.5,370.5 244.1,368.1ZM239.9,447.7 252.5,415.7 290.9,418.9 315.5,454.9 301.2,485.9 264.1,482ZM259.2,551.2 271.4,523.8 307.7,528.2 330.6,560.7 316.8,587.3 281.7,582.2ZM310.8,267.2 327.5,224.4 373.5,224.7 400.8,269.3 381.7,310.8 337.6,309.1ZM327.8,398 343.9,362.1 386.8,364.6 412,404.1 393.9,438.9 352.6,435.3ZM342.7,511.8 358.1,481.4 398.3,485.5 421.6,520.8 404.5,550.2 365.7,545.3ZM419.4,193.6 441.4,144.5 493.7,143.3 521.5,193.1 496.8,240.8 446.9,240.2ZM429.7,340.3 450.3,299.6 498.7,301.3 524.2,344.9 501.3,384.3 455,381.4ZM438.5,466.5 458,432.5 502.9,436.1 526.6,474.8 505.1,507.7 462,503.1ZM446.2,576.3 464.6,547.5 506.5,552.7 528.6,587.3 508.5,615 468.1,609.2ZM549.1,272.7 575.7,226.1 630.9,226.4 656.6,275.2 627.2,320.3 574.8,318.3ZM549.7,414.1 574.3,375.6 625,378.5 648.8,421.3 621.9,458.5 573.5,454.3ZM550.2,535.6 573,503.5 620,508.3 642.2,546.2 617.3,577.2 572.3,571.5ZM691.1,192.3 725.7,138.1 789.5,136.6 815.1,191.7 777.1,244.2 716.9,243.5ZM680.1,352.5 711.4,308.4 769.4,310.4 793.1,358 759,400.6 703.9,397.1ZM670.8,488.5 699.3,452.2 752.5,456.5 774.6,498.3 743.6,533.3 693,527.8ZM662.7,605.3 689,575.1 738.1,581.1 758.8,618.2 730.4,647.2 683.5,640.4Z"/>
<path fill-opacity="0.253" d="M194.7,194.7 207.1,151.8 248.9,150.9 276.5,194.3 262,236.1 221.8,235.7ZM219.7,330.1 232,294 271.1,295.3 296.5,333.8 282.4,368.9 244.7,366.5ZM241.5,447.9 253.6,417.3 290.3,420.3 313.8,454.7 300.2,484.4 264.7,480.7ZM260.7,551.4 272.4,525.2 307.1,529.5 329,560.5 315.8,585.9 282.2,581.1ZM312.6,267.3 328.8,226.3 372.7,226.7 398.8,269.2 380.6,309 338.4,307.4ZM329.6,398.1 345,363.8 386,366.2 410.1,403.9 392.8,437.2 353.3,433.9ZM344.4,511.9 359.1,482.9 397.6,486.9 419.9,520.6 403.5,548.8 366.4,544.1ZM421.6,193.6 442.7,146.7 492.6,145.6 519.2,193.2 495.6,238.8 447.9,238.2ZM431.7,340.4 451.5,301.5 497.7,303.1 522.1,344.8 500.2,382.5 455.9,379.7ZM440.4,466.7 459,434.2 502,437.7 524.6,474.7 504.1,506.2 462.9,501.8ZM448,576.5 465.5,549 505.7,554 526.7,587.1 507.6,613.6 468.9,608ZM551.4,272.8 576.9,228.2 629.6,228.6 654.2,275.1 626.2,318.3 576,316.4ZM551.8,414.2 575.3,377.4 623.8,380.3 646.6,421.1 620.9,456.7 574.5,452.7ZM552.1,535.8 574,505.1 618.9,509.8 640.1,546 616.4,575.6 573.3,570.2ZM693.7,192.3 726.9,140.4 787.8,139.1 812.3,191.7 776,242 718.3,241.3ZM682.5,352.6 712.5,310.5 767.9,312.4 790.6,357.9 758,398.6 705.3,395.3ZM672.9,488.7 700.3,454 751.1,458.2 772.3,498.1 742.7,531.5 694.2,526.4ZM664.8,605.6 689.9,576.7 736.8,582.5 756.6,617.9 729.6,645.7 684.6,639.2Z"/>
<path fill-opacity="0.303" d="M197.1,194.7 208.8,154.5 248,153.6 274,194.4 260.4,233.6 222.6,233.2ZM222,330.2 233.6,296.3 270.2,297.6 294.1,333.7 280.9,366.7 245.5,364.5ZM243.7,448.1 255,419.4 289.5,422.2 311.6,454.5 298.8,482.5 265.4,478.9ZM262.7,551.6 273.8,527.1 306.3,531.1 326.8,560.2 314.5,584.1 282.9,579.6ZM315.2,267.3 330.4,228.9 371.6,229.3 396.1,269.2 379,306.5 339.3,305.1ZM332,398.3 346.5,366.1 385,368.4 407.6,403.8 391.4,435.1 354.3,431.9ZM346.6,512.2 360.5,484.9 396.6,488.7 417.5,520.4 402.2,546.8 367.3,542.5ZM424.4,193.6 444.3,149.5 491.2,148.6 516.2,193.2 494.1,236.1 449.1,235.6ZM434.3,340.5 453,304.1 496.3,305.6 519.3,344.7 498.8,380.1 457.1,377.6ZM442.9,466.9 460.4,436.4 500.7,439.7 522,474.4 502.8,504 464,499.9ZM450.3,576.8 466.9,551 504.5,555.7 524.3,586.7 506.3,611.7 470,606.5ZM554.4,272.8 578.4,231 627.8,231.4 651,275 624.7,315.7 577.5,313.9ZM554.6,414.4 576.7,379.9 622.2,382.6 643.7,420.9 619.6,454.4 575.9,450.7ZM554.7,536.1 575.3,507.3 617.4,511.7 637.4,545.7 615.1,573.6 574.6,568.5ZM697.2,192.3 728.4,143.6 785.6,142.4 808.5,191.8 774.6,239 720.3,238.4ZM685.6,352.8 713.9,313.2 765.9,315.1 787.2,357.7 756.6,396 707.1,393ZM675.9,489 701.6,456.4 749.3,460.4 769.2,497.8 741.4,529.3 695.8,524.4ZM667.5,605.9 691.1,578.9 735.2,584.3 753.7,617.5 728.4,643.7 686.1,637.6Z"/>
<path fill-opacity="0.329" d="M199.5,194.7 210.6,157.1 247.1,156.4 271.4,194.4 258.7,231.1 223.4,230.8ZM224.2,330.3 235.1,298.7 269.4,299.9 291.7,333.6 279.4,364.5 246.2,362.4ZM245.8,448.3 256.5,421.4 288.7,424.1 309.3,454.3 297.4,480.5 266.1,477.2ZM264.7,551.9 275.1,529 305.6,532.8 324.7,560 313.3,582.3 283.7,578.1ZM317.7,267.4 332,231.5 370.5,231.8 393.4,269.1 377.5,304.1 340.3,302.8ZM334.3,398.4 348,368.3 383.9,370.5 405.1,403.6 390,432.9 355.2,430ZM348.8,512.5 361.9,487 395.6,490.5 415.2,520.1 400.9,544.9 368.2,540.8ZM427.3,193.6 446,152.4 489.8,151.5 513.1,193.2 492.5,233.3 450.4,232.9ZM437,340.7 454.5,306.6 495,308 516.5,344.5 497.3,377.7 458.3,375.4ZM445.4,467.2 461.8,438.6 499.5,441.8 519.4,474.2 501.5,501.9 465.1,498.1ZM452.6,577.1 468.2,553 503.3,557.4 521.8,586.4 505.1,609.8 471,604.9ZM557.4,272.9 580,233.8 626.1,234.2 647.8,275 623.3,313 579,311.4ZM557.4,414.6 578.2,382.3 620.6,384.9 640.7,420.7 618.2,452 577.3,448.6ZM557.3,536.4 576.6,509.5 616,513.6 634.6,545.3 613.9,571.5 575.9,566.7ZM700.6,192.3 730,146.8 783.3,145.7 804.8,191.8 773.1,236 722.3,235.5ZM688.8,352.9 715.3,316 763.9,317.7 783.8,357.6 755.3,393.4 708.8,390.6ZM678.8,489.2 702.9,458.8 747.5,462.5 766.1,497.5 740.2,527 697.4,522.5ZM670.2,606.3 692.4,581 733.5,586.1 750.9,617.1 727.2,641.6 687.6,635.9Z"/>
<path fill-opacity="0.364" d="M201.9,194.7 212.3,159.7 246.3,159.1 268.9,194.4 257.1,228.6 224.1,228.4ZM226.5,330.4 236.7,301 268.6,302.1 289.3,333.5 277.9,362.2 247,360.4ZM247.9,448.5 257.9,423.5 287.9,426.1 307.1,454.1 296.1,478.5 266.9,475.4ZM266.7,552.2 276.5,530.8 304.8,534.4 322.6,559.7 312,580.5 284.4,576.6ZM320.2,267.4 333.6,234 369.4,234.4 390.7,269.1 376,301.7 341.3,300.4ZM336.7,398.6 349.5,370.6 382.9,372.7 402.5,403.4 388.6,430.7 356.2,428ZM351,512.7 363.3,489 394.6,492.3 412.8,519.8 399.5,542.9 369.1,539.1ZM430.2,193.6 447.6,155.3 488.3,154.5 510.1,193.2 490.9,230.6 451.7,230.3ZM439.7,340.8 456,309.1 493.7,310.5 513.7,344.4 495.9,375.3 459.5,373.1ZM447.8,467.4 463.2,440.9 498.2,443.8 516.7,473.9 500.1,499.8 466.2,496.2ZM455,577.4 469.5,555 502.2,559.1 519.4,586.1 503.8,607.9 472.1,603.3ZM560.4,273 581.5,236.6 624.4,237 644.6,274.9 621.8,310.3 580.6,308.9ZM560.1,414.8 579.6,384.8 619.1,387.2 637.7,420.5 616.9,449.7 578.8,446.5ZM559.9,536.7 577.9,511.7 614.5,515.6 631.9,545 612.6,569.4 577.2,565ZM704.1,192.3 731.5,150 781.1,149 801.1,191.8 771.7,233 724.3,232.6ZM692,353.1 716.7,318.7 761.9,320.4 780.4,357.4 754,390.8 710.6,388.2ZM681.7,489.5 704.3,461.2 745.7,464.7 763,497.2 738.9,524.7 699.1,520.5ZM672.9,606.7 693.6,583.1 731.8,587.9 748,616.8 726,639.6 689.1,634.3Z"/>
<path fill-opacity="0.414" d="M204.3,194.7 213.9,162.3 245.4,161.7 266.3,194.4 255.5,226.1 224.9,225.9ZM228.8,330.5 238.3,303.3 267.7,304.4 286.9,333.4 276.4,360 247.7,358.3ZM250.1,448.7 259.3,425.6 287.1,428 304.8,453.9 294.7,476.5 267.6,473.7ZM268.8,552.5 277.8,532.7 304,536 320.5,559.4 310.7,578.7 285.1,575.1ZM322.8,267.5 335.2,236.6 368.3,237 388,269 374.4,299.2 342.3,298.1ZM339.1,398.8 351,372.9 381.9,374.8 400.1,403.2 387.2,428.5 357.1,426.1ZM353.3,513 364.6,491 393.6,494.1 410.5,519.6 398.2,541 370,537.5ZM433,193.6 449.3,158.1 486.9,157.5 507,193.2 489.4,227.9 453,227.6ZM442.3,340.9 457.5,311.6 492.3,312.9 510.8,344.3 494.4,372.9 460.7,370.9ZM450.3,467.6 464.6,443.1 497,445.8 514.1,473.7 498.8,497.6 467.4,494.4ZM457.3,577.7 470.7,557 501,560.8 517,585.8 502.6,605.9 473.2,601.8ZM563.5,273 583,239.4 622.7,239.8 641.4,274.8 620.3,307.7 582.1,306.4ZM562.9,415 581,387.3 617.5,389.5 634.8,420.2 615.5,447.3 580.2,444.4ZM562.5,537 579.2,513.9 613.1,517.5 629.2,544.7 611.4,567.3 578.5,563.2ZM707.6,192.2 733,153.1 778.9,152.3 797.4,191.8 770.2,230 726.2,229.7ZM695.2,353.3 718.1,321.5 759.9,323 777.1,357.2 752.6,388.2 712.4,385.9ZM684.6,489.8 705.6,463.6 743.9,466.9 759.9,496.9 737.7,522.4 700.7,518.5ZM675.6,607 694.8,585.3 730.2,589.7 745.2,616.4 724.9,637.5 690.6,632.7Z"/>
<path fill-opacity="0.498" d="M206.7,194.7 215.6,164.9 244.5,164.4 263.8,194.4 253.9,223.6 225.7,223.4ZM231.1,330.6 239.8,305.6 266.9,306.6 284.6,333.2 274.9,357.8 248.5,356.2ZM252.2,448.9 260.8,427.7 286.3,429.9 302.6,453.7 293.3,474.5 268.4,471.9ZM270.8,552.7 279.1,534.6 303.2,537.6 318.4,559.1 309.4,576.9 285.8,573.6ZM325.3,267.5 336.8,239.2 367.2,239.5 385.4,268.9 372.9,296.8 343.3,295.8ZM341.5,399 352.4,375.2 380.8,377 397.6,403 385.7,426.3 358.1,424.1ZM355.5,513.2 366,493.1 392.6,495.9 408.1,519.3 396.9,539 370.9,535.8ZM435.9,193.6 450.9,161 485.5,160.4 504,193.2 487.8,225.2 454.3,224.9ZM445,341.1 459,314.1 491,315.3 508,344.1 493,370.5 461.9,368.7ZM452.8,467.9 466,445.3 495.7,447.9 511.5,473.4 497.4,495.5 468.5,492.5ZM459.6,578.1 472,559 499.8,562.5 514.5,585.4 501.3,604 474.2,600.2ZM566.5,273.1 584.6,242.2 621,242.6 638.2,274.8 618.9,305 583.6,303.8ZM565.8,415.2 582.4,389.7 616,391.8 631.8,420 614.2,445 581.6,442.3ZM565.1,537.3 580.5,516.1 611.6,519.4 626.4,544.4 610.1,565.2 579.9,561.5ZM711.1,192.2 734.5,156.3 776.7,155.6 793.7,191.8 768.8,227 728.2,226.7ZM698.4,353.4 719.5,324.2 757.9,325.7 773.7,357.1 751.3,385.6 714.3,383.5ZM687.6,490.1 706.9,466 742.1,469 756.8,496.6 736.4,520.1 702.4,516.6ZM678.3,607.4 696,587.4 728.5,591.5 742.3,616 723.7,635.5 692.2,631Z"/>
<path fill-opacity="0.745" d="M209.2,194.7 217.3,167.5 243.7,167.1 261.2,194.4 252.2,221.1 226.5,221ZM233.3,330.7 241.4,307.9 266.1,308.9 282.2,333.1 273.4,355.6 249.3,354.2ZM254.4,449.1 262.2,429.7 285.5,431.7 300.4,453.5 291.9,472.5 269.1,470.1ZM272.8,553 280.5,536.4 302.4,539.2 316.3,558.8 308.1,575.1 286.6,572ZM327.9,267.6 338.4,241.7 366.1,242.1 382.7,268.9 371.3,294.3 344.3,293.4ZM343.9,399.1 353.9,377.4 379.8,379.1 395.1,402.9 384.3,424.2 359,422.1ZM357.8,513.5 367.4,495.1 391.7,497.7 405.8,519 395.6,537 371.8,534.1ZM438.8,193.6 452.5,163.8 484.1,163.3 501,193.2 486.2,222.4 455.6,222.3ZM447.7,341.2 460.5,316.6 489.7,317.7 505.2,344 491.5,368.1 463.1,366.5ZM455.3,468.1 467.4,447.5 494.5,449.9 508.9,473.2 496.1,493.3 469.7,490.6ZM462,578.4 473.3,561 498.7,564.2 512.1,585.1 500.1,602.1 475.3,598.6ZM569.6,273.2 586.1,245 619.3,245.4 635,274.7 617.4,302.3 585.2,301.3ZM568.6,415.4 583.8,392.2 614.4,394.1 628.9,419.8 612.8,442.6 583.1,440.2ZM567.7,537.6 581.8,518.2 610.2,521.3 623.7,544.1 608.8,563.1 581.2,559.7ZM714.6,192.2 736.1,159.4 774.4,158.8 790,191.8 767.3,224 730.3,223.8ZM701.6,353.6 721,326.9 755.9,328.3 770.3,356.9 749.9,383 716.1,381.1ZM690.5,490.3 708.2,468.4 740.3,471.2 753.7,496.3 735.2,517.8 704,514.6ZM681,607.8 697.3,589.5 726.9,593.3 739.5,615.6 722.5,633.4 693.7,629.4Z"/>
<path fill-opacity="1.000" d="M212.2,194.7 219.4,170.7 242.6,170.4 258.1,194.4 250.2,218 227.5,217.9ZM236.2,330.9 243.3,310.8 265,311.7 279.2,333 271.6,352.8 250.2,351.6ZM257.1,449.4 264,432.3 284.5,434.1 297.6,453.2 290.1,470 270.1,467.9ZM275.4,553.3 282.1,538.8 301.5,541.2 313.7,558.5 306.5,572.8 287.5,570.1ZM331.1,267.7 340.4,244.9 364.8,245.2 379.4,268.8 369.4,291.2 345.6,290.5ZM346.9,399.4 355.7,380.2 378.5,381.7 392,402.6 382.5,421.4 360.2,419.6ZM360.6,513.8 369.1,497.6 390.4,500 402.9,518.7 393.9,534.6 373,532ZM442.4,193.5 454.6,167.4 482.3,167 497.2,193.3 484.2,219 457.2,218.9ZM451.1,341.4 462.4,319.7 488.1,320.8 501.7,343.8 489.7,365.1 464.7,363.7ZM458.5,468.4 469.1,450.3 493,452.4 505.7,472.9 494.4,490.6 471.1,488.3ZM464.9,578.8 475,563.5 497.3,566.3 509.1,584.7 498.5,599.7 476.7,596.6ZM573.4,273.3 588,248.4 617.2,248.9 631,274.6 615.6,299 587.2,298.1ZM572.1,415.7 585.6,395.2 612.5,397 625.2,419.5 611.1,439.6 584.9,437.6ZM571,538 583.5,520.9 608.4,523.6 620.3,543.7 607.3,560.5 582.9,557.5ZM719,192.2 738,163.3 771.7,162.8 785.4,191.9 765.5,220.2 732.8,220.1ZM705.6,353.8 722.7,330.3 753.4,331.6 766.2,356.7 748.2,379.7 718.3,378ZM694.2,490.7 709.8,471.4 738,473.9 749.9,496 733.6,514.9 706.1,512.1ZM684.5,608.2 698.8,592.2 724.8,595.5 736,615.1 721,630.8 695.6,627.3Z"/>
<path d="M218.9,194.6 224.1,177.9 240.3,177.7 251.2,194.5 245.7,211.1 229.7,211ZM242.5,331.2 247.6,317.1 262.8,317.8 272.7,332.7 267.4,346.6 252.4,345.8ZM263,449.9 267.9,438 282.3,439.3 291.5,452.6 286.3,464.4 272.2,463ZM281,554.1 285.8,543.9 299.3,545.6 307.9,557.7 302.9,567.8 289.5,565.9ZM338.2,267.8 344.8,251.9 361.8,252.2 372.1,268.6 365.2,284.4 348.3,283.9ZM353.5,399.8 359.8,386.4 375.7,387.5 385.2,402.1 378.6,415.4 362.9,414.2ZM366.8,514.5 372.8,503.2 387.8,504.8 396.5,517.9 390.3,529.1 375.5,527.4ZM450.4,193.5 459,175.2 478.5,174.9 488.9,193.3 479.9,211.4 460.8,211.4ZM458.5,341.7 466.5,326.5 484.5,327.3 494.1,343.5 485.7,358.4 468,357.5ZM465.4,469.1 472.9,456.4 489.6,457.9 498.5,472.2 490.7,484.7 474.3,483.1ZM471.4,579.6 478.5,568.9 494.1,571 502.4,583.8 495,594.4 479.6,592.2ZM581.8,273.5 592.1,256.1 612.6,256.4 622.3,274.4 611.5,291.6 591.5,291ZM579.9,416.3 589.4,401.9 608.2,403.2 617.2,419 607.4,433.1 588.8,431.7ZM578.2,538.9 587.1,526.9 604.5,528.8 612.9,542.8 603.8,554.6 586.6,552.6ZM728.7,192.1 742.1,171.9 765.7,171.6 775.4,191.9 761.5,211.9 738.4,211.9ZM714.4,354.2 726.6,337.8 748.1,338.7 757,356.3 744.5,372.5 723.4,371.3ZM702.4,491.5 713.4,477.9 733.1,479.7 741.5,495.2 730.1,508.5 710.7,506.6ZM692,609.2 702.1,598 720.4,600.4 728.2,614.1 717.8,625.2 699.8,622.7Z"/>
<polygon points="166.3,33.3 174.7,32.7 268.9,554.8 262.3,554" fill="url(#fl)"/><polygon points="836.6,-13.8 823.2,-12.8 745.3,619.2 754.5,620.4" fill="url(#fr)"/></g></mask></defs>
<g clip-path="url(#qc)"><rect width="1110" height="207.5" fill="#1793fb" mask="url(#ms)"/>
<rect y="207.5" width="1110" height="478.5" fill="#1793f8" mask="url(#mg)"/></g>
<polyline points="0.0,319.6 1109.0,374.6" fill="none" stroke="#dc2f55" stroke-width="1.3" stroke-opacity="0.95" />
<polyline points="460.7,0.0 490.8,686.0" fill="none" stroke="#9dcc2a" stroke-width="1.4" stroke-opacity="0.95" />
<circle cx="478.5" cy="340.5" r="70" fill="none" stroke="#5a82d4" stroke-width="2.400" stroke-opacity=".6"/>
<ellipse cx="473" cy="342.8" rx="23.500" ry="70.500" fill="none" stroke="#e0305a" stroke-width="2.600" stroke-opacity=".72"/>
<ellipse cx="473.5" cy="346.3" rx="73" ry="19.500" fill="none" stroke="#8fc43c" stroke-width="2.800" stroke-opacity=".74"/>
<polygon points="470.7,232 464.8,253 476.8,253" fill="#7fba4a" fill-opacity=".85"/>
<polygon points="586.5,348.8 563.5,341.5 563.5,354" fill="#e0305a" fill-opacity=".95"/>
<rect x="495.5" y="313.5" width="10" height="10" fill="#4d86e8" fill-opacity=".8"/>
<rect x="463.5" y="382" width="3.500" height="11" fill="#e0305a" fill-opacity=".9" transform="skewY(-8)"/>
<polygon points="485,353 490,349.5 500,349.8 495,353.3" fill="#9acd32" fill-opacity=".85"/>
<path transform="translate(796.3 410.5)" d="M0 0v13l3-2.800 2 4.600 2-.9-2-4.500h4z" fill="#20242c" stroke="#e8e8e8" stroke-width="1"/>
<line x1="1076.1" y1="33.7" x2="1076.1" y2="12" stroke="#9ad02c" stroke-width="2"/>
<line x1="1076.1" y1="33.7" x2="1097.7" y2="36.3" stroke="#f03a5c" stroke-width="2"/>
<line x1="1076.1" y1="33.7" x2="1067" y2="43" stroke="#3f8fe8" stroke-width="2"/>
<circle cx="1054.5" cy="28.8" r="4" fill="#a11f38"/>
<circle cx="1084.7" cy="22.2" r="3.6" fill="#2c5fb0"/>
<circle cx="1076.1" cy="53.5" r="4" fill="#5d8a17"/>
<circle cx="1076.1" cy="11.8" r="7" fill="#9ad02c"/>
<text x="1076.1" y="15.2" font-size="9.500" text-anchor="middle" fill="#4e6a12" font-family="Liberation Sans,sans-serif">Y</text>
<circle cx="1097.7" cy="36.3" r="7" fill="#f03a5c"/>
<text x="1097.7" y="39.7" font-size="9.500" text-anchor="middle" fill="#c21e42" font-family="Liberation Sans,sans-serif">X</text>
<circle cx="1067" cy="43" r="6.8" fill="#3f8fe8"/>
<text x="1067" y="46.4" font-size="9.500" text-anchor="middle" fill="#2463b4" font-family="Liberation Sans,sans-serif">Z</text><rect x=".5" y=".5" width="1109" height="685" fill="none" stroke="#9ea3ae" stroke-opacity=".75"/>
</svg>
<div class="b" style="left:214.300px;top:91px;width:83.300px;height:21px;background:rgba(38,54,78,.42);border-radius:2px"></div><svg class="i" style="left:217.5px;top:95.8px;" width="11" height="11" viewBox="0 0 16 16"><circle cx="8" cy="2.800" r="1.700" fill="#d5dde6"/><circle cx="8" cy="8" r="1.700" fill="#d5dde6"/><circle cx="8" cy="13.200" r="1.700" fill="#d5dde6"/></svg><span class="t" style="left:233px;top:93.200px;color:#c9d6e2">Perspective</span>
</body></html>
